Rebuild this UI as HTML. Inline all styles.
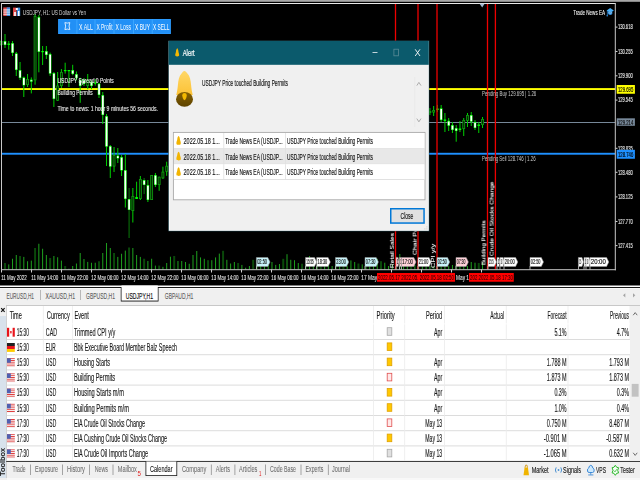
<!DOCTYPE html><html><head><meta charset="utf-8"><style>html,body{margin:0;padding:0;background:#000;width:640px;height:480px;overflow:hidden} svg{display:block} text{font-family:"Liberation Sans", sans-serif;white-space:pre}</style></head><body>
<svg width="640" height="480" viewBox="0 0 640 480">
<rect x="0.00" y="0.00" width="640.00" height="288.00" fill="#000"/>
<rect x="0.00" y="0.00" width="640.00" height="1.80" fill="#a8a8a8"/>
<rect x="4.00" y="263.00" width="2.00" height="6.50" fill="#0a480a"/>
<rect x="8.26" y="264.40" width="1.00" height="5.10" fill="#1ea01e"/>
<rect x="12.02" y="258.75" width="1.00" height="10.75" fill="#1ea01e"/>
<rect x="15.78" y="255.00" width="1.00" height="14.50" fill="#1ea01e"/>
<rect x="19.04" y="256.00" width="2.00" height="13.50" fill="#0a480a"/>
<rect x="23.30" y="256.90" width="1.00" height="12.60" fill="#1ea01e"/>
<rect x="27.06" y="261.25" width="1.00" height="8.25" fill="#1ea01e"/>
<rect x="30.82" y="260.60" width="1.00" height="8.90" fill="#1ea01e"/>
<rect x="34.08" y="248.00" width="2.00" height="21.50" fill="#0a480a"/>
<rect x="38.34" y="243.75" width="1.00" height="25.75" fill="#1ea01e"/>
<rect x="42.10" y="248.75" width="1.00" height="20.75" fill="#1ea01e"/>
<rect x="45.86" y="255.00" width="1.00" height="14.50" fill="#1ea01e"/>
<rect x="49.12" y="258.00" width="2.00" height="11.50" fill="#0a480a"/>
<rect x="53.38" y="256.00" width="1.00" height="13.50" fill="#1ea01e"/>
<rect x="57.14" y="257.25" width="1.00" height="12.25" fill="#1ea01e"/>
<rect x="60.90" y="260.60" width="1.00" height="8.90" fill="#1ea01e"/>
<rect x="64.16" y="266.00" width="2.00" height="3.50" fill="#0a480a"/>
<rect x="68.42" y="268.75" width="1.00" height="0.75" fill="#1ea01e"/>
<rect x="72.18" y="266.00" width="1.00" height="3.50" fill="#1ea01e"/>
<rect x="75.94" y="263.50" width="1.00" height="6.00" fill="#1ea01e"/>
<rect x="79.70" y="253.00" width="1.00" height="16.50" fill="#1ea01e"/>
<rect x="83.46" y="259.00" width="1.00" height="10.50" fill="#1ea01e"/>
<rect x="87.22" y="261.90" width="1.00" height="7.60" fill="#1ea01e"/>
<rect x="90.98" y="262.75" width="1.00" height="6.75" fill="#1ea01e"/>
<rect x="94.74" y="262.75" width="1.00" height="6.75" fill="#1ea01e"/>
<rect x="98.00" y="261.25" width="2.00" height="8.25" fill="#0a480a"/>
<rect x="102.26" y="253.00" width="1.00" height="16.50" fill="#1ea01e"/>
<rect x="106.02" y="243.00" width="1.00" height="26.50" fill="#1ea01e"/>
<rect x="109.78" y="248.00" width="1.00" height="21.50" fill="#1ea01e"/>
<rect x="113.04" y="253.00" width="2.00" height="16.50" fill="#0a480a"/>
<rect x="117.30" y="256.90" width="1.00" height="12.60" fill="#1ea01e"/>
<rect x="121.06" y="253.75" width="1.00" height="15.75" fill="#1ea01e"/>
<rect x="124.82" y="250.60" width="1.00" height="18.90" fill="#1ea01e"/>
<rect x="128.08" y="247.50" width="2.00" height="22.00" fill="#0a480a"/>
<rect x="132.34" y="248.00" width="1.00" height="21.50" fill="#1ea01e"/>
<rect x="136.10" y="255.00" width="1.00" height="14.50" fill="#1ea01e"/>
<rect x="139.86" y="256.90" width="1.00" height="12.60" fill="#1ea01e"/>
<rect x="143.12" y="258.75" width="2.00" height="10.75" fill="#0a480a"/>
<rect x="147.38" y="261.00" width="1.00" height="8.50" fill="#1ea01e"/>
<rect x="151.14" y="258.75" width="1.00" height="10.75" fill="#1ea01e"/>
<rect x="154.90" y="265.60" width="1.00" height="3.90" fill="#1ea01e"/>
<rect x="158.16" y="265.60" width="2.00" height="3.90" fill="#0a480a"/>
<rect x="162.42" y="266.80" width="1.00" height="2.70" fill="#1ea01e"/>
<rect x="166.18" y="263.00" width="1.00" height="6.50" fill="#1ea01e"/>
<rect x="169.94" y="256.70" width="1.00" height="12.80" fill="#1ea01e"/>
<rect x="173.20" y="256.00" width="2.00" height="13.50" fill="#0a480a"/>
<rect x="177.46" y="261.00" width="1.00" height="8.50" fill="#1ea01e"/>
<rect x="181.22" y="261.00" width="1.00" height="8.50" fill="#1ea01e"/>
<rect x="184.98" y="262.00" width="1.00" height="7.50" fill="#1ea01e"/>
<rect x="188.74" y="263.75" width="1.00" height="5.75" fill="#1ea01e"/>
<rect x="192.50" y="255.00" width="1.00" height="14.50" fill="#1ea01e"/>
<rect x="196.26" y="251.00" width="1.00" height="18.50" fill="#1ea01e"/>
<rect x="200.02" y="257.40" width="1.00" height="12.10" fill="#1ea01e"/>
<rect x="203.78" y="258.80" width="1.00" height="10.70" fill="#1ea01e"/>
<rect x="207.04" y="260.20" width="2.00" height="9.30" fill="#0a480a"/>
<rect x="211.30" y="260.20" width="1.00" height="9.30" fill="#1ea01e"/>
<rect x="215.06" y="257.40" width="1.00" height="12.10" fill="#1ea01e"/>
<rect x="218.82" y="253.60" width="1.00" height="15.90" fill="#1ea01e"/>
<rect x="222.08" y="250.80" width="2.00" height="18.70" fill="#0a480a"/>
<rect x="226.34" y="259.80" width="1.00" height="9.70" fill="#1ea01e"/>
<rect x="230.10" y="263.50" width="1.00" height="6.00" fill="#1ea01e"/>
<rect x="233.86" y="262.00" width="1.00" height="7.50" fill="#1ea01e"/>
<rect x="237.12" y="263.00" width="2.00" height="6.50" fill="#0a480a"/>
<rect x="241.38" y="264.90" width="1.00" height="4.60" fill="#1ea01e"/>
<rect x="245.14" y="267.70" width="1.00" height="1.80" fill="#1ea01e"/>
<rect x="248.90" y="266.00" width="1.00" height="3.50" fill="#1ea01e"/>
<rect x="252.16" y="259.80" width="2.00" height="9.70" fill="#0a480a"/>
<rect x="256.42" y="265.00" width="1.00" height="4.50" fill="#1ea01e"/>
<rect x="260.18" y="266.00" width="1.00" height="3.50" fill="#1ea01e"/>
<rect x="263.94" y="266.00" width="1.00" height="3.50" fill="#1ea01e"/>
<rect x="267.70" y="265.00" width="1.00" height="4.50" fill="#1ea01e"/>
<rect x="271.46" y="262.00" width="1.00" height="7.50" fill="#1ea01e"/>
<rect x="275.22" y="264.90" width="1.00" height="4.60" fill="#1ea01e"/>
<rect x="278.98" y="264.00" width="1.00" height="5.50" fill="#1ea01e"/>
<rect x="282.24" y="258.80" width="2.00" height="10.70" fill="#0a480a"/>
<rect x="286.50" y="254.20" width="1.00" height="15.30" fill="#1ea01e"/>
<rect x="290.26" y="259.80" width="1.00" height="9.70" fill="#1ea01e"/>
<rect x="294.02" y="260.20" width="1.00" height="9.30" fill="#1ea01e"/>
<rect x="297.78" y="263.00" width="1.00" height="6.50" fill="#1ea01e"/>
<rect x="301.04" y="263.75" width="2.00" height="5.75" fill="#0a480a"/>
<rect x="305.30" y="266.00" width="1.00" height="3.50" fill="#1ea01e"/>
<rect x="309.06" y="256.00" width="1.00" height="13.50" fill="#1ea01e"/>
<rect x="312.82" y="266.00" width="1.00" height="3.50" fill="#1ea01e"/>
<rect x="316.58" y="265.00" width="1.00" height="4.50" fill="#1ea01e"/>
<rect x="319.84" y="266.00" width="2.00" height="3.50" fill="#0a480a"/>
<rect x="324.10" y="266.00" width="1.00" height="3.50" fill="#1ea01e"/>
<rect x="327.86" y="264.00" width="1.00" height="5.50" fill="#1ea01e"/>
<rect x="331.62" y="266.00" width="1.00" height="3.50" fill="#1ea01e"/>
<rect x="335.38" y="264.30" width="1.00" height="5.20" fill="#1ea01e"/>
<rect x="339.14" y="264.00" width="1.00" height="5.50" fill="#1ea01e"/>
<rect x="342.40" y="265.00" width="2.00" height="4.50" fill="#0a480a"/>
<rect x="346.66" y="266.00" width="1.00" height="3.50" fill="#1ea01e"/>
<rect x="350.42" y="260.40" width="1.00" height="9.10" fill="#1ea01e"/>
<rect x="354.18" y="262.00" width="1.00" height="7.50" fill="#1ea01e"/>
<rect x="357.44" y="263.50" width="2.00" height="6.00" fill="#0a480a"/>
<rect x="361.70" y="264.30" width="1.00" height="5.20" fill="#1ea01e"/>
<rect x="365.46" y="266.00" width="1.00" height="3.50" fill="#1ea01e"/>
<rect x="369.22" y="266.00" width="1.00" height="3.50" fill="#1ea01e"/>
<rect x="372.98" y="265.00" width="1.00" height="4.50" fill="#1ea01e"/>
<rect x="376.74" y="258.80" width="1.00" height="10.70" fill="#1ea01e"/>
<rect x="380.00" y="261.20" width="2.00" height="8.30" fill="#0a480a"/>
<rect x="384.26" y="262.70" width="1.00" height="6.80" fill="#1ea01e"/>
<rect x="388.02" y="266.00" width="1.00" height="3.50" fill="#1ea01e"/>
<rect x="391.78" y="264.00" width="1.00" height="5.50" fill="#1ea01e"/>
<rect x="395.54" y="256.50" width="1.00" height="13.00" fill="#1ea01e"/>
<rect x="399.30" y="254.00" width="1.00" height="15.50" fill="#1ea01e"/>
<rect x="403.06" y="266.00" width="1.00" height="3.50" fill="#1ea01e"/>
<rect x="406.82" y="266.00" width="1.00" height="3.50" fill="#1ea01e"/>
<rect x="410.08" y="266.00" width="2.00" height="3.50" fill="#0a480a"/>
<rect x="414.34" y="265.00" width="1.00" height="4.50" fill="#1ea01e"/>
<rect x="418.10" y="266.00" width="1.00" height="3.50" fill="#1ea01e"/>
<rect x="421.86" y="266.00" width="1.00" height="3.50" fill="#1ea01e"/>
<rect x="425.62" y="265.00" width="1.00" height="4.50" fill="#1ea01e"/>
<rect x="429.38" y="266.00" width="1.00" height="3.50" fill="#1ea01e"/>
<rect x="432.64" y="266.00" width="2.00" height="3.50" fill="#0a480a"/>
<rect x="436.90" y="266.00" width="1.00" height="3.50" fill="#1ea01e"/>
<rect x="440.66" y="266.00" width="1.00" height="3.50" fill="#1ea01e"/>
<rect x="444.42" y="265.00" width="1.00" height="4.50" fill="#1ea01e"/>
<rect x="448.18" y="266.00" width="1.00" height="3.50" fill="#1ea01e"/>
<rect x="451.94" y="265.00" width="1.00" height="4.50" fill="#1ea01e"/>
<rect x="455.20" y="265.00" width="2.00" height="4.50" fill="#0a480a"/>
<rect x="459.46" y="266.00" width="1.00" height="3.50" fill="#1ea01e"/>
<rect x="463.22" y="266.00" width="1.00" height="3.50" fill="#1ea01e"/>
<rect x="466.98" y="266.00" width="1.00" height="3.50" fill="#1ea01e"/>
<rect x="470.74" y="262.00" width="1.00" height="7.50" fill="#1ea01e"/>
<rect x="474.50" y="262.70" width="1.00" height="6.80" fill="#1ea01e"/>
<rect x="477.76" y="263.00" width="2.00" height="6.50" fill="#0a480a"/>
<rect x="482.02" y="262.50" width="1.00" height="7.00" fill="#1ea01e"/>
<rect x="1.00" y="88.10" width="614.00" height="1.90" fill="#ffff00"/>
<rect x="1.00" y="122.00" width="614.00" height="1.00" fill="#778899"/>
<rect x="1.00" y="152.80" width="614.00" height="1.90" fill="#1e90ff"/>
<rect x="0.74" y="40.00" width="1.00" height="6.00" fill="#00d000"/>
<rect x="-0.16" y="41.00" width="2.80" height="4.00" fill="#10a010"/>
<rect x="0.64" y="41.80" width="1.20" height="2.40" fill="#042a04"/>
<rect x="4.50" y="34.00" width="1.00" height="14.00" fill="#00d000"/>
<rect x="3.70" y="41.00" width="2.60" height="4.00" fill="#00ff00"/>
<rect x="4.20" y="41.70" width="1.70" height="2.80" fill="#ffffff"/>
<rect x="8.26" y="41.00" width="1.00" height="8.70" fill="#00d000"/>
<rect x="7.46" y="43.50" width="2.60" height="1.50" fill="#00ff00"/>
<rect x="12.02" y="41.00" width="1.00" height="15.00" fill="#00d000"/>
<rect x="11.22" y="43.00" width="2.60" height="10.00" fill="#00ff00"/>
<rect x="11.72" y="43.70" width="1.70" height="8.80" fill="#ffffff"/>
<rect x="15.78" y="51.90" width="1.00" height="24.10" fill="#00d000"/>
<rect x="14.98" y="53.30" width="2.60" height="16.70" fill="#00ff00"/>
<rect x="15.48" y="54.00" width="1.70" height="15.50" fill="#ffffff"/>
<rect x="19.54" y="62.00" width="1.00" height="18.00" fill="#00d000"/>
<rect x="18.74" y="70.00" width="2.60" height="8.00" fill="#00ff00"/>
<rect x="19.24" y="70.70" width="1.70" height="6.80" fill="#ffffff"/>
<rect x="23.30" y="76.60" width="1.00" height="20.40" fill="#00d000"/>
<rect x="22.50" y="77.40" width="2.60" height="8.00" fill="#00ff00"/>
<rect x="23.00" y="78.10" width="1.70" height="6.80" fill="#ffffff"/>
<rect x="27.06" y="74.00" width="1.00" height="13.00" fill="#00d000"/>
<rect x="26.16" y="79.00" width="2.80" height="6.00" fill="#10a010"/>
<rect x="26.96" y="79.80" width="1.20" height="4.40" fill="#042a04"/>
<rect x="30.82" y="77.40" width="1.00" height="16.00" fill="#00d000"/>
<rect x="30.02" y="79.60" width="2.60" height="2.15" fill="#00ff00"/>
<rect x="30.52" y="80.30" width="1.70" height="0.95" fill="#ffffff"/>
<rect x="34.58" y="14.00" width="1.00" height="70.70" fill="#00d000"/>
<rect x="33.68" y="16.00" width="2.80" height="64.30" fill="#10a010"/>
<rect x="34.48" y="16.80" width="1.20" height="62.70" fill="#042a04"/>
<rect x="38.34" y="15.00" width="1.00" height="57.30" fill="#00d000"/>
<rect x="37.54" y="17.00" width="2.60" height="34.90" fill="#00ff00"/>
<rect x="38.04" y="17.70" width="1.70" height="33.70" fill="#ffffff"/>
<rect x="42.10" y="46.00" width="1.00" height="19.00" fill="#00d000"/>
<rect x="41.30" y="51.00" width="2.60" height="1.20" fill="#00ff00"/>
<rect x="45.86" y="46.00" width="1.00" height="13.00" fill="#00d000"/>
<rect x="45.06" y="51.00" width="2.60" height="4.00" fill="#00ff00"/>
<rect x="45.56" y="51.70" width="1.70" height="2.80" fill="#ffffff"/>
<rect x="49.62" y="52.60" width="1.00" height="23.40" fill="#00d000"/>
<rect x="48.82" y="54.00" width="2.60" height="19.70" fill="#00ff00"/>
<rect x="49.32" y="54.70" width="1.70" height="18.50" fill="#ffffff"/>
<rect x="53.38" y="72.00" width="1.00" height="35.00" fill="#00d000"/>
<rect x="52.58" y="73.00" width="2.60" height="26.00" fill="#00ff00"/>
<rect x="53.08" y="73.70" width="1.70" height="24.80" fill="#ffffff"/>
<rect x="57.14" y="72.00" width="1.00" height="29.00" fill="#00d000"/>
<rect x="56.24" y="85.60" width="2.80" height="15.10" fill="#10a010"/>
<rect x="57.04" y="86.40" width="1.20" height="13.50" fill="#042a04"/>
<rect x="60.90" y="69.00" width="1.00" height="19.00" fill="#00d000"/>
<rect x="60.00" y="72.00" width="2.80" height="14.00" fill="#10a010"/>
<rect x="60.80" y="72.80" width="1.20" height="12.40" fill="#042a04"/>
<rect x="64.66" y="62.70" width="1.00" height="10.90" fill="#00d000"/>
<rect x="63.86" y="70.00" width="2.60" height="1.20" fill="#00ff00"/>
<rect x="68.42" y="70.00" width="1.00" height="17.00" fill="#00d000"/>
<rect x="67.62" y="70.00" width="2.60" height="1.20" fill="#00ff00"/>
<rect x="72.18" y="64.80" width="1.00" height="10.40" fill="#00d000"/>
<rect x="71.38" y="70.00" width="2.60" height="4.00" fill="#00ff00"/>
<rect x="71.88" y="70.70" width="1.70" height="2.80" fill="#ffffff"/>
<rect x="75.94" y="71.50" width="1.00" height="8.90" fill="#00d000"/>
<rect x="75.14" y="74.00" width="2.60" height="4.30" fill="#00ff00"/>
<rect x="75.64" y="74.70" width="1.70" height="3.10" fill="#ffffff"/>
<rect x="79.70" y="77.80" width="1.00" height="25.00" fill="#00d000"/>
<rect x="78.90" y="80.00" width="2.60" height="6.00" fill="#00ff00"/>
<rect x="79.40" y="80.70" width="1.70" height="4.80" fill="#ffffff"/>
<rect x="83.46" y="78.00" width="1.00" height="8.00" fill="#00d000"/>
<rect x="82.66" y="80.00" width="2.60" height="4.00" fill="#00ff00"/>
<rect x="83.16" y="80.70" width="1.70" height="2.80" fill="#ffffff"/>
<rect x="87.22" y="74.00" width="1.00" height="15.20" fill="#00d000"/>
<rect x="86.32" y="80.00" width="2.80" height="6.00" fill="#10a010"/>
<rect x="87.12" y="80.80" width="1.20" height="4.40" fill="#042a04"/>
<rect x="90.98" y="80.40" width="1.00" height="8.80" fill="#00d000"/>
<rect x="90.18" y="82.00" width="2.60" height="4.00" fill="#00ff00"/>
<rect x="90.68" y="82.70" width="1.70" height="2.80" fill="#ffffff"/>
<rect x="94.74" y="79.00" width="1.00" height="6.60" fill="#00d000"/>
<rect x="93.94" y="82.50" width="2.60" height="1.20" fill="#00ff00"/>
<rect x="98.50" y="83.00" width="1.00" height="15.00" fill="#00d000"/>
<rect x="97.70" y="83.50" width="2.60" height="11.50" fill="#00ff00"/>
<rect x="98.20" y="84.20" width="1.70" height="10.30" fill="#ffffff"/>
<rect x="102.26" y="92.00" width="1.00" height="32.00" fill="#00d000"/>
<rect x="101.46" y="95.00" width="2.60" height="20.00" fill="#00ff00"/>
<rect x="101.96" y="95.70" width="1.70" height="18.80" fill="#ffffff"/>
<rect x="106.02" y="114.00" width="1.00" height="52.00" fill="#00d000"/>
<rect x="105.22" y="116.00" width="2.60" height="30.70" fill="#00ff00"/>
<rect x="105.72" y="116.70" width="1.70" height="29.50" fill="#ffffff"/>
<rect x="109.78" y="145.00" width="1.00" height="33.00" fill="#00d000"/>
<rect x="108.98" y="146.00" width="2.60" height="20.70" fill="#00ff00"/>
<rect x="109.48" y="146.70" width="1.70" height="19.50" fill="#ffffff"/>
<rect x="113.54" y="147.00" width="1.00" height="25.00" fill="#00d000"/>
<rect x="112.64" y="155.00" width="2.80" height="11.50" fill="#10a010"/>
<rect x="113.44" y="155.80" width="1.20" height="9.90" fill="#042a04"/>
<rect x="117.30" y="148.00" width="1.00" height="15.00" fill="#00d000"/>
<rect x="116.50" y="155.50" width="2.60" height="3.00" fill="#00ff00"/>
<rect x="117.00" y="156.20" width="1.70" height="1.80" fill="#ffffff"/>
<rect x="121.06" y="155.00" width="1.00" height="21.00" fill="#00d000"/>
<rect x="120.26" y="157.00" width="2.60" height="13.50" fill="#00ff00"/>
<rect x="120.76" y="157.70" width="1.70" height="12.30" fill="#ffffff"/>
<rect x="124.82" y="154.00" width="1.00" height="53.50" fill="#00d000"/>
<rect x="124.02" y="170.00" width="2.60" height="29.00" fill="#00ff00"/>
<rect x="124.52" y="170.70" width="1.70" height="27.80" fill="#ffffff"/>
<rect x="128.58" y="188.00" width="1.00" height="50.00" fill="#0a7a0a"/>
<rect x="127.78" y="199.00" width="2.60" height="11.00" fill="#00ff00"/>
<rect x="128.28" y="199.70" width="1.70" height="9.80" fill="#ffffff"/>
<rect x="132.34" y="188.00" width="1.00" height="34.50" fill="#00d000"/>
<rect x="131.44" y="196.00" width="2.80" height="15.00" fill="#10a010"/>
<rect x="132.24" y="196.80" width="1.20" height="13.40" fill="#042a04"/>
<rect x="136.10" y="181.70" width="1.00" height="17.30" fill="#00d000"/>
<rect x="135.30" y="197.00" width="2.60" height="2.00" fill="#00ff00"/>
<rect x="139.86" y="176.00" width="1.00" height="24.00" fill="#00d000"/>
<rect x="138.96" y="179.00" width="2.80" height="20.00" fill="#10a010"/>
<rect x="139.76" y="179.80" width="1.20" height="18.40" fill="#042a04"/>
<rect x="143.62" y="178.00" width="1.00" height="16.00" fill="#0a7a0a"/>
<rect x="142.82" y="180.00" width="2.60" height="5.00" fill="#00ff00"/>
<rect x="143.32" y="180.70" width="1.70" height="3.80" fill="#ffffff"/>
<rect x="147.38" y="180.00" width="1.00" height="22.00" fill="#00d000"/>
<rect x="146.58" y="185.00" width="2.60" height="15.00" fill="#00ff00"/>
<rect x="147.08" y="185.70" width="1.70" height="13.80" fill="#ffffff"/>
<rect x="151.14" y="175.00" width="1.00" height="25.00" fill="#00d000"/>
<rect x="150.24" y="175.00" width="2.80" height="25.00" fill="#10a010"/>
<rect x="151.04" y="175.80" width="1.20" height="23.40" fill="#042a04"/>
<rect x="154.90" y="173.00" width="1.00" height="14.00" fill="#00d000"/>
<rect x="154.10" y="175.00" width="2.60" height="10.00" fill="#00ff00"/>
<rect x="154.60" y="175.70" width="1.70" height="8.80" fill="#ffffff"/>
<rect x="158.66" y="176.70" width="1.00" height="14.10" fill="#00d000"/>
<rect x="157.76" y="176.70" width="2.80" height="8.30" fill="#10a010"/>
<rect x="158.56" y="177.50" width="1.20" height="6.70" fill="#042a04"/>
<rect x="162.42" y="166.70" width="1.00" height="12.30" fill="#00d000"/>
<rect x="161.52" y="171.70" width="2.80" height="6.60" fill="#10a010"/>
<rect x="162.32" y="172.50" width="1.20" height="5.00" fill="#042a04"/>
<rect x="166.18" y="161.70" width="1.00" height="14.10" fill="#00d000"/>
<rect x="165.28" y="165.80" width="2.80" height="5.90" fill="#10a010"/>
<rect x="166.08" y="166.60" width="1.20" height="4.30" fill="#042a04"/>
<rect x="429.38" y="108.00" width="1.00" height="7.00" fill="#00d000"/>
<rect x="428.48" y="111.00" width="2.80" height="2.00" fill="#10a010"/>
<rect x="429.28" y="111.80" width="1.20" height="0.40" fill="#042a04"/>
<rect x="433.14" y="106.00" width="1.00" height="10.00" fill="#00d000"/>
<rect x="432.24" y="110.00" width="2.80" height="2.50" fill="#10a010"/>
<rect x="433.04" y="110.80" width="1.20" height="0.90" fill="#042a04"/>
<rect x="436.90" y="105.00" width="1.00" height="7.00" fill="#00d000"/>
<rect x="436.10" y="108.50" width="2.60" height="1.50" fill="#00ff00"/>
<rect x="440.66" y="105.00" width="1.00" height="17.00" fill="#00d000"/>
<rect x="439.86" y="108.30" width="2.60" height="11.70" fill="#00ff00"/>
<rect x="440.36" y="109.00" width="1.70" height="10.50" fill="#ffffff"/>
<rect x="444.42" y="113.00" width="1.00" height="19.00" fill="#00d000"/>
<rect x="443.62" y="119.50" width="2.60" height="1.50" fill="#00ff00"/>
<rect x="448.18" y="118.00" width="1.00" height="13.00" fill="#00d000"/>
<rect x="447.38" y="120.80" width="2.60" height="5.00" fill="#00ff00"/>
<rect x="447.88" y="121.50" width="1.70" height="3.80" fill="#ffffff"/>
<rect x="451.94" y="122.00" width="1.00" height="11.00" fill="#00d000"/>
<rect x="451.14" y="125.00" width="2.60" height="5.00" fill="#00ff00"/>
<rect x="451.64" y="125.70" width="1.70" height="3.80" fill="#ffffff"/>
<rect x="455.70" y="125.00" width="1.00" height="16.70" fill="#00d000"/>
<rect x="454.90" y="128.00" width="2.60" height="3.00" fill="#00ff00"/>
<rect x="455.40" y="128.70" width="1.70" height="1.80" fill="#ffffff"/>
<rect x="459.46" y="121.00" width="1.00" height="11.00" fill="#00d000"/>
<rect x="458.66" y="128.50" width="2.60" height="1.50" fill="#00ff00"/>
<rect x="463.22" y="118.00" width="1.00" height="18.00" fill="#00d000"/>
<rect x="462.32" y="120.00" width="2.80" height="9.00" fill="#10a010"/>
<rect x="463.12" y="120.80" width="1.20" height="7.40" fill="#042a04"/>
<rect x="466.98" y="113.00" width="1.00" height="14.00" fill="#00d000"/>
<rect x="466.08" y="115.00" width="2.80" height="5.80" fill="#10a010"/>
<rect x="466.88" y="115.80" width="1.20" height="4.20" fill="#042a04"/>
<rect x="470.74" y="112.00" width="1.00" height="14.00" fill="#00d000"/>
<rect x="469.94" y="115.00" width="2.60" height="6.70" fill="#00ff00"/>
<rect x="470.44" y="115.70" width="1.70" height="5.50" fill="#ffffff"/>
<rect x="474.50" y="120.00" width="1.00" height="10.00" fill="#00d000"/>
<rect x="473.70" y="122.00" width="2.60" height="6.00" fill="#00ff00"/>
<rect x="474.20" y="122.70" width="1.70" height="4.80" fill="#ffffff"/>
<rect x="478.26" y="122.00" width="1.00" height="11.00" fill="#00d000"/>
<rect x="477.46" y="124.50" width="2.60" height="1.50" fill="#00ff00"/>
<rect x="482.02" y="117.00" width="1.00" height="11.00" fill="#00d000"/>
<rect x="481.12" y="119.00" width="2.80" height="6.00" fill="#10a010"/>
<rect x="481.92" y="119.80" width="1.20" height="4.40" fill="#042a04"/>
<rect x="394.85" y="4.00" width="1.30" height="265.50" fill="#ee0000"/>
<rect x="417.35" y="4.00" width="1.30" height="265.50" fill="#ee0000"/>
<rect x="436.35" y="4.00" width="1.30" height="265.50" fill="#ee0000"/>
<rect x="486.85" y="4.00" width="1.30" height="265.50" fill="#ee0000"/>
<rect x="494.75" y="4.00" width="1.30" height="265.50" fill="#ee0000"/>
<rect x="1.00" y="3.00" width="614.50" height="1.00" fill="#e8e8e8"/>
<rect x="1.00" y="3.00" width="1.00" height="267.00" fill="#c8c8c8"/>
<rect x="614.80" y="3.00" width="1.00" height="267.30" fill="#c8c8c8"/>
<rect x="1.00" y="269.20" width="614.80" height="1.00" fill="#c8c8c8"/>
<polygon points="479.6,3.8 484.6,3.8 482.2,7.6" fill="#a0b8d0"/>
<rect x="3.30" y="7.40" width="6.80" height="8.60" fill="#e04848"/>
<rect x="6.70" y="7.40" width="3.40" height="8.60" fill="#3a8ee0"/>
<rect x="3.30" y="9.50" width="6.80" height="0.90" fill="#ffffff"/>
<rect x="3.30" y="11.60" width="6.80" height="0.90" fill="#ffffff"/>
<rect x="3.30" y="13.70" width="6.80" height="0.90" fill="#ffffff"/>
<rect x="13.00" y="7.60" width="3.60" height="8.40" fill="#e04848"/>
<rect x="16.80" y="7.60" width="3.40" height="8.40" fill="#3a8ee0"/>
<rect x="14.20" y="12.00" width="1.60" height="4.00" fill="#ffffff"/>
<rect x="18.00" y="11.00" width="1.50" height="5.00" fill="#ffffff"/>
<rect x="15.80" y="8.00" width="2.00" height="2.00" fill="#ffffff"/>
<text x="22.80" y="14.60" font-size="7.6" fill="#d4d4d4" text-anchor="start" textLength="63.20" lengthAdjust="spacingAndGlyphs" style="will-change:transform">USDJPY, H1: US Dollar vs Yen</text>
<rect x="58.10" y="19.00" width="112.80" height="15.00" fill="#2e9cff"/>
<rect x="58.90" y="19.90" width="111.20" height="13.40" fill="#2290f6"/>
<rect x="76.40" y="19.25" width="1.00" height="14.75" fill="#3aa6ff"/>
<rect x="94.50" y="19.25" width="1.00" height="14.75" fill="#3aa6ff"/>
<rect x="113.50" y="19.25" width="1.00" height="14.75" fill="#3aa6ff"/>
<rect x="133.00" y="19.25" width="1.00" height="14.75" fill="#3aa6ff"/>
<rect x="151.75" y="19.25" width="1.00" height="14.75" fill="#3aa6ff"/>
<path d="M64.9,22.6 Q66.4,26.1 64.9,29.6 Q67.35,28.6 69.8,29.6 Q68.3,26.1 69.8,22.6 Q67.35,23.6 64.9,22.6 Z" fill="none" stroke="#f4f8ff" stroke-width="0.85"/>
<text x="79.00" y="29.80" font-size="8.2" fill="#ffffff" text-anchor="start" textLength="14.00" lengthAdjust="spacingAndGlyphs" style="will-change:transform">X ALL</text>
<text x="96.50" y="29.80" font-size="8.2" fill="#ffffff" text-anchor="start" textLength="16.00" lengthAdjust="spacingAndGlyphs" style="will-change:transform">X Profit</text>
<text x="115.50" y="29.80" font-size="8.2" fill="#ffffff" text-anchor="start" textLength="15.50" lengthAdjust="spacingAndGlyphs" style="will-change:transform">X Loss</text>
<text x="135.00" y="29.80" font-size="8.2" fill="#ffffff" text-anchor="start" textLength="15.00" lengthAdjust="spacingAndGlyphs" style="will-change:transform">X BUY</text>
<text x="153.00" y="29.80" font-size="8.2" fill="#ffffff" text-anchor="start" textLength="16.50" lengthAdjust="spacingAndGlyphs" style="will-change:transform">X SELL</text>
<text x="57.50" y="83.00" font-size="8.0" fill="#f0f0f0" text-anchor="start" textLength="56.30" lengthAdjust="spacingAndGlyphs" stroke="#f0f0f0" stroke-width="0.1" style="will-change:transform">USDJPY Spread 0 Points</text>
<text x="57.50" y="95.20" font-size="8.0" fill="#f0f0f0" text-anchor="start" textLength="35.30" lengthAdjust="spacingAndGlyphs" stroke="#f0f0f0" stroke-width="0.1" style="will-change:transform">Building Permits</text>
<text x="57.50" y="111.20" font-size="8.0" fill="#f0f0f0" text-anchor="start" textLength="100.40" lengthAdjust="spacingAndGlyphs" stroke="#f0f0f0" stroke-width="0.1" style="will-change:transform">Time to news: 1 hour 9 minutes 56 seconds.</text>
<text x="482.10" y="95.90" font-size="7.0" fill="#c8c8c8" text-anchor="start" textLength="54.20" lengthAdjust="spacingAndGlyphs" style="will-change:transform">Pending Buy 129.695 | 1.26</text>
<text x="482.10" y="160.90" font-size="7.0" fill="#c8c8c8" text-anchor="start" textLength="53.50" lengthAdjust="spacingAndGlyphs" style="will-change:transform">Pending Sell 128.746 | 1.26</text>
<text x="573.20" y="14.80" font-size="7.6" fill="#f4f4f4" text-anchor="start" textLength="31.90" lengthAdjust="spacingAndGlyphs" stroke="#f4f4f4" stroke-width="0.1" style="will-change:transform">Trade News EA</text>
<polygon points="606.6,10.6 610.2,8.0 613.8,10.6 610.2,12.9" fill="#49b0f8"/>
<path d="M608.1,11.6 L608.1,14.0 Q610.2,15.8 612.3,14.0 L612.3,11.6 L610.2,13.0 Z" fill="#2f8fe0"/>
<path d="M608.6,12.6 Q610.2,13.8 611.8,12.6" fill="none" stroke="#d8eeff" stroke-width="0.7"/>
<rect x="606.90" y="10.80" width="0.70" height="4.40" fill="#2f8fe0"/>
<circle cx="607.2" cy="15.8" r="0.8" fill="#2f8fe0"/>
<rect x="615.50" y="26.60" width="2.00" height="1.00" fill="#d0d0d0"/>
<text x="617.90" y="29.30" font-size="8.0" fill="#f0f0f0" text-anchor="start" textLength="14.80" lengthAdjust="spacingAndGlyphs" stroke="#f0f0f0" stroke-width="0.12" style="will-change:transform">130.618</text>
<rect x="615.50" y="51.00" width="2.00" height="1.00" fill="#d0d0d0"/>
<text x="617.90" y="53.70" font-size="8.0" fill="#f0f0f0" text-anchor="start" textLength="14.80" lengthAdjust="spacingAndGlyphs" stroke="#f0f0f0" stroke-width="0.12" style="will-change:transform">130.255</text>
<rect x="615.50" y="75.30" width="2.00" height="1.00" fill="#d0d0d0"/>
<text x="617.90" y="78.00" font-size="8.0" fill="#f0f0f0" text-anchor="start" textLength="14.80" lengthAdjust="spacingAndGlyphs" stroke="#f0f0f0" stroke-width="0.12" style="will-change:transform">129.900</text>
<rect x="615.50" y="99.60" width="2.00" height="1.00" fill="#d0d0d0"/>
<text x="617.90" y="102.30" font-size="8.0" fill="#f0f0f0" text-anchor="start" textLength="14.80" lengthAdjust="spacingAndGlyphs" stroke="#f0f0f0" stroke-width="0.12" style="will-change:transform">129.545</text>
<rect x="615.50" y="147.80" width="2.00" height="1.00" fill="#d0d0d0"/>
<text x="617.90" y="150.50" font-size="8.0" fill="#f0f0f0" text-anchor="start" textLength="14.80" lengthAdjust="spacingAndGlyphs" stroke="#f0f0f0" stroke-width="0.12" style="will-change:transform">128.835</text>
<rect x="615.50" y="171.80" width="2.00" height="1.00" fill="#d0d0d0"/>
<text x="617.90" y="174.50" font-size="8.0" fill="#f0f0f0" text-anchor="start" textLength="14.80" lengthAdjust="spacingAndGlyphs" stroke="#f0f0f0" stroke-width="0.12" style="will-change:transform">128.480</text>
<rect x="615.50" y="196.40" width="2.00" height="1.00" fill="#d0d0d0"/>
<text x="617.90" y="199.10" font-size="8.0" fill="#f0f0f0" text-anchor="start" textLength="14.80" lengthAdjust="spacingAndGlyphs" stroke="#f0f0f0" stroke-width="0.12" style="will-change:transform">128.125</text>
<rect x="615.50" y="221.00" width="2.00" height="1.00" fill="#d0d0d0"/>
<text x="617.90" y="223.70" font-size="8.0" fill="#f0f0f0" text-anchor="start" textLength="14.80" lengthAdjust="spacingAndGlyphs" stroke="#f0f0f0" stroke-width="0.12" style="will-change:transform">127.770</text>
<rect x="615.50" y="245.10" width="2.00" height="1.00" fill="#d0d0d0"/>
<text x="617.90" y="247.80" font-size="8.0" fill="#f0f0f0" text-anchor="start" textLength="14.80" lengthAdjust="spacingAndGlyphs" stroke="#f0f0f0" stroke-width="0.12" style="will-change:transform">127.415</text>
<rect x="616.70" y="85.00" width="18.20" height="8.75" fill="#ffff00"/>
<text x="617.90" y="92.28" font-size="8.0" fill="#000" text-anchor="start" textLength="15.40" lengthAdjust="spacingAndGlyphs" stroke="#000" stroke-width="0.15">129.695</text>
<rect x="616.70" y="118.30" width="18.20" height="7.50" fill="#778899"/>
<text x="617.90" y="124.95" font-size="8.0" fill="#0a0a0a" text-anchor="start" textLength="15.40" lengthAdjust="spacingAndGlyphs" stroke="#0a0a0a" stroke-width="0.15">129.214</text>
<rect x="616.70" y="149.80" width="18.20" height="8.95" fill="#1e90ff"/>
<text x="617.90" y="157.18" font-size="8.0" fill="#000" text-anchor="start" textLength="15.40" lengthAdjust="spacingAndGlyphs" stroke="#000" stroke-width="0.15">128.746</text>
<rect x="1.00" y="269.50" width="1.00" height="3.00" fill="#d0d0d0"/>
<text x="1.20" y="279.50" font-size="7.9" fill="#ececec" text-anchor="start" textLength="25.50" lengthAdjust="spacingAndGlyphs" stroke="#ececec" stroke-width="0.08" style="will-change:transform">11 May 2022</text>
<rect x="31.00" y="269.50" width="1.00" height="3.00" fill="#d0d0d0"/>
<text x="31.20" y="279.50" font-size="7.9" fill="#ececec" text-anchor="start" textLength="27.20" lengthAdjust="spacingAndGlyphs" stroke="#ececec" stroke-width="0.08" style="will-change:transform">11 May 14:00</text>
<rect x="61.00" y="269.50" width="1.00" height="3.00" fill="#d0d0d0"/>
<text x="61.20" y="279.50" font-size="7.9" fill="#ececec" text-anchor="start" textLength="27.20" lengthAdjust="spacingAndGlyphs" stroke="#ececec" stroke-width="0.08" style="will-change:transform">11 May 22:00</text>
<rect x="91.00" y="269.50" width="1.00" height="3.00" fill="#d0d0d0"/>
<text x="91.20" y="279.50" font-size="7.9" fill="#ececec" text-anchor="start" textLength="27.20" lengthAdjust="spacingAndGlyphs" stroke="#ececec" stroke-width="0.08" style="will-change:transform">12 May 06:00</text>
<rect x="121.00" y="269.50" width="1.00" height="3.00" fill="#d0d0d0"/>
<text x="121.20" y="279.50" font-size="7.9" fill="#ececec" text-anchor="start" textLength="27.20" lengthAdjust="spacingAndGlyphs" stroke="#ececec" stroke-width="0.08" style="will-change:transform">12 May 14:00</text>
<rect x="151.00" y="269.50" width="1.00" height="3.00" fill="#d0d0d0"/>
<text x="151.20" y="279.50" font-size="7.9" fill="#ececec" text-anchor="start" textLength="27.20" lengthAdjust="spacingAndGlyphs" stroke="#ececec" stroke-width="0.08" style="will-change:transform">12 May 22:00</text>
<rect x="181.00" y="269.50" width="1.00" height="3.00" fill="#d0d0d0"/>
<text x="181.20" y="279.50" font-size="7.9" fill="#ececec" text-anchor="start" textLength="27.20" lengthAdjust="spacingAndGlyphs" stroke="#ececec" stroke-width="0.08" style="will-change:transform">13 May 06:00</text>
<rect x="211.00" y="269.50" width="1.00" height="3.00" fill="#d0d0d0"/>
<text x="211.20" y="279.50" font-size="7.9" fill="#ececec" text-anchor="start" textLength="27.20" lengthAdjust="spacingAndGlyphs" stroke="#ececec" stroke-width="0.08" style="will-change:transform">13 May 14:00</text>
<rect x="241.00" y="269.50" width="1.00" height="3.00" fill="#d0d0d0"/>
<text x="241.20" y="279.50" font-size="7.9" fill="#ececec" text-anchor="start" textLength="27.20" lengthAdjust="spacingAndGlyphs" stroke="#ececec" stroke-width="0.08" style="will-change:transform">13 May 22:00</text>
<rect x="271.00" y="269.50" width="1.00" height="3.00" fill="#d0d0d0"/>
<text x="271.20" y="279.50" font-size="7.9" fill="#ececec" text-anchor="start" textLength="27.20" lengthAdjust="spacingAndGlyphs" stroke="#ececec" stroke-width="0.08" style="will-change:transform">16 May 06:00</text>
<rect x="301.00" y="269.50" width="1.00" height="3.00" fill="#d0d0d0"/>
<text x="301.20" y="279.50" font-size="7.9" fill="#ececec" text-anchor="start" textLength="27.20" lengthAdjust="spacingAndGlyphs" stroke="#ececec" stroke-width="0.08" style="will-change:transform">16 May 14:00</text>
<rect x="331.00" y="269.50" width="1.00" height="3.00" fill="#d0d0d0"/>
<text x="331.20" y="279.50" font-size="7.9" fill="#ececec" text-anchor="start" textLength="27.20" lengthAdjust="spacingAndGlyphs" stroke="#ececec" stroke-width="0.08" style="will-change:transform">16 May 22:00</text>
<rect x="361.00" y="269.50" width="1.00" height="3.00" fill="#d0d0d0"/>
<text x="361.20" y="279.50" font-size="7.9" fill="#ececec" text-anchor="start" textLength="16.00" lengthAdjust="spacingAndGlyphs" stroke="#ececec" stroke-width="0.08" style="will-change:transform">17 May</text>
<rect x="391.00" y="269.50" width="1.00" height="3.00" fill="#d0d0d0"/>
<rect x="421.00" y="269.50" width="1.00" height="3.00" fill="#d0d0d0"/>
<rect x="451.00" y="269.50" width="1.00" height="3.00" fill="#d0d0d0"/>
<rect x="481.00" y="269.50" width="1.00" height="3.00" fill="#d0d0d0"/>
<text x="456.00" y="279.50" font-size="7.9" fill="#ececec" text-anchor="start" textLength="13.00" lengthAdjust="spacingAndGlyphs" stroke="#ececec" stroke-width="0.08" style="will-change:transform">May 1</text>
<rect x="377.00" y="273.00" width="78.00" height="8.75" fill="#ff0000"/>
<text x="378.00" y="280.30" font-size="7.4" fill="#1a0000" text-anchor="start" textLength="76.00" lengthAdjust="spacingAndGlyphs">2022.05.17 2022.05. 2022.05.18 02:50</text>
<rect x="469.00" y="273.00" width="44.75" height="8.75" fill="#ff0000"/>
<text x="470.00" y="280.30" font-size="7.4" fill="#1a0000" text-anchor="start" textLength="43.00" lengthAdjust="spacingAndGlyphs">202 2022.05.18 17:30</text>
<rect x="256.00" y="266.00" width="0.80" height="3.50" fill="#d0d0d0"/>
<polygon points="256.40,257.5 267.80,257.5 270.00,262.00 267.80,266.5 256.40,266.5" fill="#c8f4fa" stroke="#9a9a9a" stroke-width="0.5"/>
<text x="257.20" y="264.30" font-size="6.6" fill="#101010" text-anchor="start" textLength="9.80" lengthAdjust="spacingAndGlyphs" stroke="#101010" stroke-width="0.15">02:50</text>
<rect x="305.10" y="266.00" width="0.80" height="3.50" fill="#d0d0d0"/>
<polygon points="305.50,257.5 314.50,257.5 316.70,262.00 314.50,266.5 305.50,266.5" fill="#ffffff" stroke="#9a9a9a" stroke-width="0.5"/>
<text x="306.30" y="264.30" font-size="6.6" fill="#101010" text-anchor="start" textLength="7.40" lengthAdjust="spacingAndGlyphs" stroke="#101010" stroke-width="0.15">15:55</text>
<rect x="316.30" y="266.00" width="0.80" height="3.50" fill="#d0d0d0"/>
<polygon points="316.70,257.5 328.10,257.5 330.30,262.00 328.10,266.5 316.70,266.5" fill="#ffffff" stroke="#9a9a9a" stroke-width="0.5"/>
<text x="317.50" y="264.30" font-size="6.6" fill="#101010" text-anchor="start" textLength="9.80" lengthAdjust="spacingAndGlyphs" stroke="#101010" stroke-width="0.15">18:30</text>
<rect x="335.10" y="266.00" width="0.80" height="3.50" fill="#d0d0d0"/>
<polygon points="335.50,257.5 346.55,257.5 348.75,262.00 346.55,266.5 335.50,266.5" fill="#c8f4fa" stroke="#9a9a9a" stroke-width="0.5"/>
<text x="336.30" y="264.30" font-size="6.6" fill="#101010" text-anchor="start" textLength="9.45" lengthAdjust="spacingAndGlyphs" stroke="#101010" stroke-width="0.15">23:00</text>
<rect x="364.60" y="266.00" width="0.80" height="3.50" fill="#d0d0d0"/>
<polygon points="365.00,257.5 376.20,257.5 378.40,262.00 376.20,266.5 365.00,266.5" fill="#c8f4fa" stroke="#9a9a9a" stroke-width="0.5"/>
<text x="365.80" y="264.30" font-size="6.6" fill="#101010" text-anchor="start" textLength="9.60" lengthAdjust="spacingAndGlyphs" stroke="#101010" stroke-width="0.15">07:30</text>
<rect x="395.60" y="266.00" width="0.80" height="3.50" fill="#d0d0d0"/>
<polygon points="396.00,257.5 398.10,257.5 399.00,262.00 398.10,266.5 396.00,266.5" fill="#ffd0d8" stroke="#9a9a9a" stroke-width="0.5"/>
<text x="396.80" y="264.30" font-size="6.6" fill="#101010" text-anchor="start" textLength="1.50" lengthAdjust="spacingAndGlyphs" stroke="#101010" stroke-width="0.15">1</text>
<rect x="399.10" y="266.00" width="0.80" height="3.50" fill="#d0d0d0"/>
<polygon points="399.50,257.5 401.25,257.5 402.00,262.00 401.25,266.5 399.50,266.5" fill="#ffd0d8" stroke="#9a9a9a" stroke-width="0.5"/>
<text x="400.30" y="264.30" font-size="6.6" fill="#101010" text-anchor="start" textLength="1.50" lengthAdjust="spacingAndGlyphs" stroke="#101010" stroke-width="0.15">1</text>
<rect x="401.10" y="266.00" width="0.80" height="3.50" fill="#d0d0d0"/>
<polygon points="401.50,257.5 413.80,257.5 416.00,262.00 413.80,266.5 401.50,266.5" fill="#ffd0d8" stroke="#9a9a9a" stroke-width="0.5"/>
<text x="402.30" y="264.30" font-size="6.6" fill="#101010" text-anchor="start" textLength="10.70" lengthAdjust="spacingAndGlyphs" stroke="#101010" stroke-width="0.15">17:00</text>
<rect x="417.60" y="266.00" width="0.80" height="3.50" fill="#d0d0d0"/>
<polygon points="418.00,257.5 429.05,257.5 431.25,262.00 429.05,266.5 418.00,266.5" fill="#ffffff" stroke="#9a9a9a" stroke-width="0.5"/>
<text x="418.80" y="264.30" font-size="6.6" fill="#101010" text-anchor="start" textLength="9.45" lengthAdjust="spacingAndGlyphs" stroke="#101010" stroke-width="0.15">21:00</text>
<rect x="436.60" y="266.00" width="0.80" height="3.50" fill="#d0d0d0"/>
<polygon points="437.00,257.5 447.50,257.5 449.70,262.00 447.50,266.5 437.00,266.5" fill="#c8f4fa" stroke="#9a9a9a" stroke-width="0.5"/>
<text x="437.80" y="264.30" font-size="6.6" fill="#101010" text-anchor="start" textLength="8.90" lengthAdjust="spacingAndGlyphs" stroke="#101010" stroke-width="0.15">02:50</text>
<rect x="455.60" y="266.00" width="0.80" height="3.50" fill="#d0d0d0"/>
<polygon points="456.00,257.5 466.20,257.5 468.40,262.00 466.20,266.5 456.00,266.5" fill="#ffd0d8" stroke="#9a9a9a" stroke-width="0.5"/>
<text x="456.80" y="264.30" font-size="6.6" fill="#101010" text-anchor="start" textLength="8.60" lengthAdjust="spacingAndGlyphs" stroke="#101010" stroke-width="0.15">07:30</text>
<rect x="487.60" y="266.00" width="0.80" height="3.50" fill="#d0d0d0"/>
<polygon points="488.00,257.5 494.30,257.5 496.50,262.00 494.30,266.5 488.00,266.5" fill="#ffffff" stroke="#9a9a9a" stroke-width="0.5"/>
<text x="488.80" y="264.30" font-size="6.6" fill="#101010" text-anchor="start" textLength="4.70" lengthAdjust="spacingAndGlyphs" stroke="#101010" stroke-width="0.15">15:5</text>
<rect x="496.60" y="266.00" width="0.80" height="3.50" fill="#d0d0d0"/>
<polygon points="497.00,257.5 499.10,257.5 500.00,262.00 499.10,266.5 497.00,266.5" fill="#ffffff" stroke="#9a9a9a" stroke-width="0.5"/>
<text x="497.80" y="264.30" font-size="6.6" fill="#101010" text-anchor="start" textLength="1.50" lengthAdjust="spacingAndGlyphs" stroke="#101010" stroke-width="0.15">1</text>
<rect x="499.60" y="266.00" width="0.80" height="3.50" fill="#d0d0d0"/>
<polygon points="500.00,257.5 503.15,257.5 504.50,262.00 503.15,266.5 500.00,266.5" fill="#ffffff" stroke="#9a9a9a" stroke-width="0.5"/>
<text x="500.80" y="264.30" font-size="6.6" fill="#101010" text-anchor="start" textLength="1.55" lengthAdjust="spacingAndGlyphs" stroke="#101010" stroke-width="0.15">18</text>
<rect x="503.60" y="266.00" width="0.80" height="3.50" fill="#d0d0d0"/>
<polygon points="504.00,257.5 515.60,257.5 517.80,262.00 515.60,266.5 504.00,266.5" fill="#ffffff" stroke="#9a9a9a" stroke-width="0.5"/>
<text x="504.80" y="264.30" font-size="6.6" fill="#101010" text-anchor="start" textLength="10.00" lengthAdjust="spacingAndGlyphs" stroke="#101010" stroke-width="0.15">20:00</text>
<rect x="529.60" y="266.00" width="0.80" height="3.50" fill="#d0d0d0"/>
<polygon points="530.00,257.5 541.30,257.5 543.50,262.00 541.30,266.5 530.00,266.5" fill="#ffffff" stroke="#9a9a9a" stroke-width="0.5"/>
<text x="530.80" y="264.30" font-size="6.6" fill="#101010" text-anchor="start" textLength="9.70" lengthAdjust="spacingAndGlyphs" stroke="#101010" stroke-width="0.15">02:50</text>
<rect x="578.00" y="266.00" width="0.80" height="3.50" fill="#d0d0d0"/>
<polygon points="578.40,257.5 581.97,257.5 583.50,262.00 581.97,266.5 578.40,266.5" fill="#ffffff" stroke="#9a9a9a" stroke-width="0.5"/>
<text x="579.20" y="264.30" font-size="6.6" fill="#101010" text-anchor="start" textLength="1.97" lengthAdjust="spacingAndGlyphs" stroke="#101010" stroke-width="0.15">15</text>
<rect x="583.60" y="266.00" width="0.80" height="3.50" fill="#d0d0d0"/>
<polygon points="584.00,257.5 585.75,257.5 586.50,262.00 585.75,266.5 584.00,266.5" fill="#ffffff" stroke="#9a9a9a" stroke-width="0.5"/>
<text x="584.80" y="264.30" font-size="6.6" fill="#101010" text-anchor="start" textLength="1.50" lengthAdjust="spacingAndGlyphs" stroke="#101010" stroke-width="0.15">1</text>
<rect x="585.60" y="266.00" width="0.80" height="3.50" fill="#d0d0d0"/>
<polygon points="586.00,257.5 589.15,257.5 590.50,262.00 589.15,266.5 586.00,266.5" fill="#ffffff" stroke="#9a9a9a" stroke-width="0.5"/>
<text x="586.80" y="264.30" font-size="6.6" fill="#101010" text-anchor="start" textLength="1.55" lengthAdjust="spacingAndGlyphs" stroke="#101010" stroke-width="0.15">18</text>
<rect x="589.60" y="266.00" width="0.80" height="3.50" fill="#d0d0d0"/>
<polygon points="590.00,257.5 606.60,257.5 608.80,262.00 606.60,266.5 590.00,266.5" fill="#ffffff" stroke="#9a9a9a" stroke-width="0.5"/>
<text x="590.80" y="264.30" font-size="6.6" fill="#101010" text-anchor="start" textLength="15.00" lengthAdjust="spacingAndGlyphs" stroke="#101010" stroke-width="0.15">20:00</text>
<text style="will-change:transform" transform="translate(394.20,268.00) rotate(-90) scale(1,0.72)" x="0" y="0" font-size="6.6" fill="#ffffff" stroke="#ffffff" stroke-width="0.06" textLength="35.00" lengthAdjust="spacingAndGlyphs">Retail Sales</text>
<text style="will-change:transform" transform="translate(417.00,255.00) rotate(-90) scale(1,0.72)" x="0" y="0" font-size="6.9" fill="#ffffff" stroke="#ffffff" stroke-width="0.06">Chair Powell Speaks</text>
<text style="will-change:transform" transform="translate(435.20,268.00) rotate(-90) scale(1,0.72)" x="0" y="0" font-size="6.6" fill="#ffffff" stroke="#ffffff" stroke-width="0.06" textLength="24.40" lengthAdjust="spacingAndGlyphs">CPI y/y</text>
<text style="will-change:transform" transform="translate(485.80,265.00) rotate(-90) scale(1,0.72)" x="0" y="0" font-size="6.6" fill="#ffffff" stroke="#ffffff" stroke-width="0.06" textLength="44.50" lengthAdjust="spacingAndGlyphs">Building Permits</text>
<text style="will-change:transform" transform="translate(493.90,256.00) rotate(-90) scale(1,0.72)" x="0" y="0" font-size="6.6" fill="#ffffff" stroke="#ffffff" stroke-width="0.06" textLength="74.50" lengthAdjust="spacingAndGlyphs">Crude Oil Stocks Change</text>
<rect x="0.00" y="285.50" width="640.00" height="1.70" fill="#ffffff"/>
<rect x="0.00" y="287.20" width="640.00" height="0.80" fill="#101010"/>
<rect x="0.00" y="288.00" width="640.00" height="1.00" fill="#fafafa"/>
<rect x="0.00" y="289.00" width="640.00" height="16.50" fill="#f0f0f0"/>
<text x="6.50" y="298.50" font-size="8.9" fill="#5c5c5c" text-anchor="start" textLength="27.50" lengthAdjust="spacingAndGlyphs" stroke="#5c5c5c" stroke-width="0.1">EURUSD,H1</text>
<text x="45.50" y="298.50" font-size="8.9" fill="#5c5c5c" text-anchor="start" textLength="29.50" lengthAdjust="spacingAndGlyphs" stroke="#5c5c5c" stroke-width="0.1">XAUUSD,H1</text>
<text x="86.00" y="298.50" font-size="8.9" fill="#5c5c5c" text-anchor="start" textLength="29.00" lengthAdjust="spacingAndGlyphs" stroke="#5c5c5c" stroke-width="0.1">GBPUSD,H1</text>
<rect x="120.80" y="287.20" width="37.70" height="14.30" fill="#101010"/>
<rect x="121.50" y="285.50" width="36.30" height="15.10" fill="#ffffff"/>
<text x="125.80" y="298.50" font-size="8.9" fill="#101010" text-anchor="start" textLength="27.20" lengthAdjust="spacingAndGlyphs" stroke="#101010" stroke-width="0.15">USDJPY,H1</text>
<text x="164.80" y="298.50" font-size="8.9" fill="#5c5c5c" text-anchor="start" textLength="28.60" lengthAdjust="spacingAndGlyphs" stroke="#5c5c5c" stroke-width="0.1">GBPAUD,H1</text>
<rect x="40.00" y="290.00" width="1.00" height="10.00" fill="#b8b8b8"/>
<rect x="80.00" y="290.00" width="1.00" height="10.00" fill="#b8b8b8"/>
<rect x="120.00" y="290.00" width="1.00" height="10.00" fill="#b8b8b8"/>
<polygon points="625.3,293.3 625.3,297.4 623.0,295.35" fill="#a4a4a4"/>
<polygon points="633.0,293.3 633.0,297.4 635.3,295.35" fill="#a4a4a4"/>
<rect x="0.00" y="305.50" width="640.00" height="156.00" fill="#ffffff"/>
<rect x="0.00" y="305.00" width="6.20" height="175.00" fill="#f0f0f0"/>
<rect x="0.00" y="316.00" width="6.20" height="162.00" fill="#d8e2ec"/>
<path d="M1.2,308.2 L4.6,311.9 M4.6,308.2 L1.2,311.9" stroke="#101010" stroke-width="1.15"/>
<text transform="translate(5.2,476) rotate(-90)" font-size="6.8" fill="#1a1a1a" textLength="28" lengthAdjust="spacingAndGlyphs" font-weight="bold">Toolbox</text>
<rect x="6.20" y="305.00" width="633.80" height="1.00" fill="#c8c8c8"/>
<rect x="6.00" y="305.00" width="0.80" height="156.50" fill="#c8c8c8"/>
<text x="9.70" y="318.70" font-size="10.0" fill="#1a1a1a" text-anchor="start" textLength="12.10" lengthAdjust="spacingAndGlyphs" stroke="#1a1a1a" stroke-width="0.15">Time</text>
<text x="46.80" y="318.70" font-size="10.0" fill="#1a1a1a" text-anchor="start" textLength="23.00" lengthAdjust="spacingAndGlyphs" stroke="#1a1a1a" stroke-width="0.15">Currency</text>
<text x="74.40" y="318.70" font-size="10.0" fill="#1a1a1a" text-anchor="start" textLength="14.50" lengthAdjust="spacingAndGlyphs" stroke="#1a1a1a" stroke-width="0.15">Event</text>
<text x="376.60" y="318.70" font-size="10.0" fill="#1a1a1a" text-anchor="start" textLength="18.20" lengthAdjust="spacingAndGlyphs" stroke="#1a1a1a" stroke-width="0.15">Priority</text>
<text x="426.00" y="318.70" font-size="10.0" fill="#1a1a1a" text-anchor="start" textLength="16.20" lengthAdjust="spacingAndGlyphs" stroke="#1a1a1a" stroke-width="0.15">Period</text>
<text x="490.20" y="318.70" font-size="10.0" fill="#1a1a1a" text-anchor="start" textLength="13.80" lengthAdjust="spacingAndGlyphs" stroke="#1a1a1a" stroke-width="0.15">Actual</text>
<text x="547.60" y="318.70" font-size="10.0" fill="#1a1a1a" text-anchor="start" textLength="19.00" lengthAdjust="spacingAndGlyphs" stroke="#1a1a1a" stroke-width="0.15">Forecast</text>
<text x="610.00" y="318.70" font-size="10.0" fill="#1a1a1a" text-anchor="start" textLength="19.00" lengthAdjust="spacingAndGlyphs" stroke="#1a1a1a" stroke-width="0.15">Previous</text>
<rect x="42.90" y="306.00" width="0.80" height="17.50" fill="#ececec"/>
<rect x="72.10" y="306.00" width="0.80" height="17.50" fill="#ececec"/>
<rect x="373.00" y="306.00" width="0.80" height="17.50" fill="#ececec"/>
<rect x="404.30" y="306.00" width="0.80" height="17.50" fill="#ececec"/>
<rect x="444.00" y="306.00" width="0.80" height="17.50" fill="#ececec"/>
<rect x="505.85" y="306.00" width="0.80" height="17.50" fill="#ececec"/>
<rect x="567.60" y="306.00" width="0.80" height="17.50" fill="#ececec"/>
<rect x="629.60" y="306.00" width="0.80" height="17.50" fill="#ececec"/>
<rect x="6.80" y="339.00" width="623.20" height="1.00" fill="#dcdcdc"/>
<rect x="42.90" y="324.30" width="0.80" height="15.20" fill="#ececec"/>
<rect x="72.10" y="324.30" width="0.80" height="15.20" fill="#ececec"/>
<rect x="373.00" y="324.30" width="0.80" height="15.20" fill="#ececec"/>
<rect x="404.30" y="324.30" width="0.80" height="15.20" fill="#ececec"/>
<rect x="444.00" y="324.30" width="0.80" height="15.20" fill="#ececec"/>
<rect x="505.85" y="324.30" width="0.80" height="15.20" fill="#ececec"/>
<rect x="567.60" y="324.30" width="0.80" height="15.20" fill="#ececec"/>
<rect x="629.60" y="324.30" width="0.80" height="15.20" fill="#ececec"/>
<rect x="7.00" y="327.80" width="7.80" height="8.90" fill="#ffffff"/>
<rect x="7.00" y="327.80" width="2.20" height="8.90" fill="#e8141c"/>
<rect x="12.60" y="327.80" width="2.20" height="8.90" fill="#e8141c"/>
<rect x="10.20" y="331.00" width="1.40" height="2.40" fill="#e8141c"/>
<text x="16.80" y="335.60" font-size="10.0" fill="#1a1a1a" text-anchor="start" textLength="12.20" lengthAdjust="spacingAndGlyphs" stroke="#1a1a1a" stroke-width="0.15">15:30</text>
<text x="45.80" y="335.60" font-size="10.0" fill="#1a1a1a" text-anchor="start" textLength="11.20" lengthAdjust="spacingAndGlyphs" stroke="#1a1a1a" stroke-width="0.15">CAD</text>
<text x="73.90" y="335.60" font-size="10.0" fill="#1a1a1a" text-anchor="start" textLength="41.40" lengthAdjust="spacingAndGlyphs" stroke="#1a1a1a" stroke-width="0.15">Trimmed CPI y/y</text>
<rect x="387.2" y="327.70" width="4.6" height="7.6" fill="#e0e0e0" stroke="#a8a8a8" stroke-width="0.8"/>
<text x="434.00" y="335.60" font-size="10.0" fill="#1a1a1a" text-anchor="start" textLength="8.20" lengthAdjust="spacingAndGlyphs" stroke="#1a1a1a" stroke-width="0.15">Apr</text>
<text x="554.40" y="335.60" font-size="10.0" fill="#1a1a1a" text-anchor="start" textLength="12.20" lengthAdjust="spacingAndGlyphs" stroke="#1a1a1a" stroke-width="0.15">5.1%</text>
<text x="616.80" y="335.60" font-size="10.0" fill="#1a1a1a" text-anchor="start" textLength="12.20" lengthAdjust="spacingAndGlyphs" stroke="#1a1a1a" stroke-width="0.15">4.7%</text>
<rect x="6.80" y="354.20" width="623.20" height="1.00" fill="#dcdcdc"/>
<rect x="42.90" y="339.50" width="0.80" height="15.20" fill="#ececec"/>
<rect x="72.10" y="339.50" width="0.80" height="15.20" fill="#ececec"/>
<rect x="373.00" y="339.50" width="0.80" height="15.20" fill="#ececec"/>
<rect x="404.30" y="339.50" width="0.80" height="15.20" fill="#ececec"/>
<rect x="444.00" y="339.50" width="0.80" height="15.20" fill="#ececec"/>
<rect x="7.00" y="343.00" width="7.80" height="3.00" fill="#202020"/>
<rect x="7.00" y="346.00" width="7.80" height="3.00" fill="#e8141c"/>
<rect x="7.00" y="349.00" width="7.80" height="2.90" fill="#ffcc00"/>
<text x="16.80" y="350.80" font-size="10.0" fill="#1a1a1a" text-anchor="start" textLength="12.20" lengthAdjust="spacingAndGlyphs" stroke="#1a1a1a" stroke-width="0.15">15:30</text>
<text x="45.80" y="350.80" font-size="10.0" fill="#1a1a1a" text-anchor="start" textLength="9.90" lengthAdjust="spacingAndGlyphs" stroke="#1a1a1a" stroke-width="0.15">EUR</text>
<text x="73.90" y="350.80" font-size="10.0" fill="#1a1a1a" text-anchor="start" textLength="103.20" lengthAdjust="spacingAndGlyphs" stroke="#1a1a1a" stroke-width="0.15">Bbk Executive Board Member Balz Speech</text>
<rect x="387.2" y="342.90" width="4.6" height="7.6" fill="#ffc800" stroke="#e0a000" stroke-width="0.8"/>
<rect x="6.80" y="369.40" width="623.20" height="1.00" fill="#dcdcdc"/>
<rect x="42.90" y="354.70" width="0.80" height="15.20" fill="#ececec"/>
<rect x="72.10" y="354.70" width="0.80" height="15.20" fill="#ececec"/>
<rect x="373.00" y="354.70" width="0.80" height="15.20" fill="#ececec"/>
<rect x="404.30" y="354.70" width="0.80" height="15.20" fill="#ececec"/>
<rect x="444.00" y="354.70" width="0.80" height="15.20" fill="#ececec"/>
<rect x="505.85" y="354.70" width="0.80" height="15.20" fill="#ececec"/>
<rect x="567.60" y="354.70" width="0.80" height="15.20" fill="#ececec"/>
<rect x="629.60" y="354.70" width="0.80" height="15.20" fill="#ececec"/>
<rect x="7.00" y="358.20" width="7.80" height="1.00" fill="#e04040"/>
<rect x="7.00" y="359.20" width="7.80" height="0.80" fill="#f4f4f4"/>
<rect x="7.00" y="360.00" width="7.80" height="1.00" fill="#e04040"/>
<rect x="7.00" y="361.00" width="7.80" height="0.80" fill="#f4f4f4"/>
<rect x="7.00" y="361.80" width="7.80" height="1.00" fill="#e04040"/>
<rect x="7.00" y="362.80" width="7.80" height="0.80" fill="#f4f4f4"/>
<rect x="7.00" y="363.60" width="7.80" height="1.00" fill="#e04040"/>
<rect x="7.00" y="364.60" width="7.80" height="0.80" fill="#f4f4f4"/>
<rect x="7.00" y="365.40" width="7.80" height="1.00" fill="#e04040"/>
<rect x="7.00" y="366.40" width="7.80" height="0.80" fill="#f4f4f4"/>
<rect x="7.00" y="358.20" width="3.80" height="4.60" fill="#5060b0"/>
<text x="16.80" y="366.00" font-size="10.0" fill="#1a1a1a" text-anchor="start" textLength="12.20" lengthAdjust="spacingAndGlyphs" stroke="#1a1a1a" stroke-width="0.15">15:30</text>
<text x="45.80" y="366.00" font-size="10.0" fill="#1a1a1a" text-anchor="start" textLength="10.40" lengthAdjust="spacingAndGlyphs" stroke="#1a1a1a" stroke-width="0.15">USD</text>
<text x="73.90" y="366.00" font-size="10.0" fill="#1a1a1a" text-anchor="start" textLength="36.20" lengthAdjust="spacingAndGlyphs" stroke="#1a1a1a" stroke-width="0.15">Housing Starts</text>
<rect x="387.2" y="358.10" width="4.6" height="7.6" fill="#ffc800" stroke="#e0a000" stroke-width="0.8"/>
<text x="434.00" y="366.00" font-size="10.0" fill="#1a1a1a" text-anchor="start" textLength="8.20" lengthAdjust="spacingAndGlyphs" stroke="#1a1a1a" stroke-width="0.15">Apr</text>
<text x="546.85" y="366.00" font-size="10.0" fill="#1a1a1a" text-anchor="start" textLength="19.75" lengthAdjust="spacingAndGlyphs" stroke="#1a1a1a" stroke-width="0.15">1.788 M</text>
<text x="609.25" y="366.00" font-size="10.0" fill="#1a1a1a" text-anchor="start" textLength="19.75" lengthAdjust="spacingAndGlyphs" stroke="#1a1a1a" stroke-width="0.15">1.793 M</text>
<rect x="6.80" y="384.60" width="623.20" height="1.00" fill="#dcdcdc"/>
<rect x="42.90" y="369.90" width="0.80" height="15.20" fill="#ececec"/>
<rect x="72.10" y="369.90" width="0.80" height="15.20" fill="#ececec"/>
<rect x="373.00" y="369.90" width="0.80" height="15.20" fill="#ececec"/>
<rect x="404.30" y="369.90" width="0.80" height="15.20" fill="#ececec"/>
<rect x="444.00" y="369.90" width="0.80" height="15.20" fill="#ececec"/>
<rect x="505.85" y="369.90" width="0.80" height="15.20" fill="#ececec"/>
<rect x="567.60" y="369.90" width="0.80" height="15.20" fill="#ececec"/>
<rect x="629.60" y="369.90" width="0.80" height="15.20" fill="#ececec"/>
<rect x="7.00" y="373.40" width="7.80" height="1.00" fill="#e04040"/>
<rect x="7.00" y="374.40" width="7.80" height="0.80" fill="#f4f4f4"/>
<rect x="7.00" y="375.20" width="7.80" height="1.00" fill="#e04040"/>
<rect x="7.00" y="376.20" width="7.80" height="0.80" fill="#f4f4f4"/>
<rect x="7.00" y="377.00" width="7.80" height="1.00" fill="#e04040"/>
<rect x="7.00" y="378.00" width="7.80" height="0.80" fill="#f4f4f4"/>
<rect x="7.00" y="378.80" width="7.80" height="1.00" fill="#e04040"/>
<rect x="7.00" y="379.80" width="7.80" height="0.80" fill="#f4f4f4"/>
<rect x="7.00" y="380.60" width="7.80" height="1.00" fill="#e04040"/>
<rect x="7.00" y="381.60" width="7.80" height="0.80" fill="#f4f4f4"/>
<rect x="7.00" y="373.40" width="3.80" height="4.60" fill="#5060b0"/>
<text x="16.80" y="381.20" font-size="10.0" fill="#1a1a1a" text-anchor="start" textLength="12.20" lengthAdjust="spacingAndGlyphs" stroke="#1a1a1a" stroke-width="0.15">15:30</text>
<text x="45.80" y="381.20" font-size="10.0" fill="#1a1a1a" text-anchor="start" textLength="10.40" lengthAdjust="spacingAndGlyphs" stroke="#1a1a1a" stroke-width="0.15">USD</text>
<text x="73.90" y="381.20" font-size="10.0" fill="#1a1a1a" text-anchor="start" textLength="41.20" lengthAdjust="spacingAndGlyphs" stroke="#1a1a1a" stroke-width="0.15">Building Permits</text>
<rect x="387.2" y="373.30" width="4.6" height="7.6" fill="#ffe8e8" stroke="#e05050" stroke-width="0.8"/>
<text x="434.00" y="381.20" font-size="10.0" fill="#1a1a1a" text-anchor="start" textLength="8.20" lengthAdjust="spacingAndGlyphs" stroke="#1a1a1a" stroke-width="0.15">Apr</text>
<text x="546.85" y="381.20" font-size="10.0" fill="#1a1a1a" text-anchor="start" textLength="19.75" lengthAdjust="spacingAndGlyphs" stroke="#1a1a1a" stroke-width="0.15">1.873 M</text>
<text x="609.25" y="381.20" font-size="10.0" fill="#1a1a1a" text-anchor="start" textLength="19.75" lengthAdjust="spacingAndGlyphs" stroke="#1a1a1a" stroke-width="0.15">1.873 M</text>
<rect x="6.80" y="399.80" width="623.20" height="1.00" fill="#dcdcdc"/>
<rect x="42.90" y="385.10" width="0.80" height="15.20" fill="#ececec"/>
<rect x="72.10" y="385.10" width="0.80" height="15.20" fill="#ececec"/>
<rect x="373.00" y="385.10" width="0.80" height="15.20" fill="#ececec"/>
<rect x="404.30" y="385.10" width="0.80" height="15.20" fill="#ececec"/>
<rect x="444.00" y="385.10" width="0.80" height="15.20" fill="#ececec"/>
<rect x="505.85" y="385.10" width="0.80" height="15.20" fill="#ececec"/>
<rect x="567.60" y="385.10" width="0.80" height="15.20" fill="#ececec"/>
<rect x="629.60" y="385.10" width="0.80" height="15.20" fill="#ececec"/>
<rect x="7.00" y="388.60" width="7.80" height="1.00" fill="#e04040"/>
<rect x="7.00" y="389.60" width="7.80" height="0.80" fill="#f4f4f4"/>
<rect x="7.00" y="390.40" width="7.80" height="1.00" fill="#e04040"/>
<rect x="7.00" y="391.40" width="7.80" height="0.80" fill="#f4f4f4"/>
<rect x="7.00" y="392.20" width="7.80" height="1.00" fill="#e04040"/>
<rect x="7.00" y="393.20" width="7.80" height="0.80" fill="#f4f4f4"/>
<rect x="7.00" y="394.00" width="7.80" height="1.00" fill="#e04040"/>
<rect x="7.00" y="395.00" width="7.80" height="0.80" fill="#f4f4f4"/>
<rect x="7.00" y="395.80" width="7.80" height="1.00" fill="#e04040"/>
<rect x="7.00" y="396.80" width="7.80" height="0.80" fill="#f4f4f4"/>
<rect x="7.00" y="388.60" width="3.80" height="4.60" fill="#5060b0"/>
<text x="16.80" y="396.40" font-size="10.0" fill="#1a1a1a" text-anchor="start" textLength="12.20" lengthAdjust="spacingAndGlyphs" stroke="#1a1a1a" stroke-width="0.15">15:30</text>
<text x="45.80" y="396.40" font-size="10.0" fill="#1a1a1a" text-anchor="start" textLength="10.40" lengthAdjust="spacingAndGlyphs" stroke="#1a1a1a" stroke-width="0.15">USD</text>
<text x="73.90" y="396.40" font-size="10.0" fill="#1a1a1a" text-anchor="start" textLength="50.00" lengthAdjust="spacingAndGlyphs" stroke="#1a1a1a" stroke-width="0.15">Housing Starts m/m</text>
<rect x="387.2" y="388.50" width="4.6" height="7.6" fill="#ffc800" stroke="#e0a000" stroke-width="0.8"/>
<text x="434.00" y="396.40" font-size="10.0" fill="#1a1a1a" text-anchor="start" textLength="8.20" lengthAdjust="spacingAndGlyphs" stroke="#1a1a1a" stroke-width="0.15">Apr</text>
<text x="554.40" y="396.40" font-size="10.0" fill="#1a1a1a" text-anchor="start" textLength="12.20" lengthAdjust="spacingAndGlyphs" stroke="#1a1a1a" stroke-width="0.15">0.3%</text>
<text x="616.80" y="396.40" font-size="10.0" fill="#1a1a1a" text-anchor="start" textLength="12.20" lengthAdjust="spacingAndGlyphs" stroke="#1a1a1a" stroke-width="0.15">0.3%</text>
<rect x="6.80" y="415.00" width="623.20" height="1.00" fill="#dcdcdc"/>
<rect x="42.90" y="400.30" width="0.80" height="15.20" fill="#ececec"/>
<rect x="72.10" y="400.30" width="0.80" height="15.20" fill="#ececec"/>
<rect x="373.00" y="400.30" width="0.80" height="15.20" fill="#ececec"/>
<rect x="404.30" y="400.30" width="0.80" height="15.20" fill="#ececec"/>
<rect x="444.00" y="400.30" width="0.80" height="15.20" fill="#ececec"/>
<rect x="505.85" y="400.30" width="0.80" height="15.20" fill="#ececec"/>
<rect x="567.60" y="400.30" width="0.80" height="15.20" fill="#ececec"/>
<rect x="629.60" y="400.30" width="0.80" height="15.20" fill="#ececec"/>
<rect x="7.00" y="403.80" width="7.80" height="1.00" fill="#e04040"/>
<rect x="7.00" y="404.80" width="7.80" height="0.80" fill="#f4f4f4"/>
<rect x="7.00" y="405.60" width="7.80" height="1.00" fill="#e04040"/>
<rect x="7.00" y="406.60" width="7.80" height="0.80" fill="#f4f4f4"/>
<rect x="7.00" y="407.40" width="7.80" height="1.00" fill="#e04040"/>
<rect x="7.00" y="408.40" width="7.80" height="0.80" fill="#f4f4f4"/>
<rect x="7.00" y="409.20" width="7.80" height="1.00" fill="#e04040"/>
<rect x="7.00" y="410.20" width="7.80" height="0.80" fill="#f4f4f4"/>
<rect x="7.00" y="411.00" width="7.80" height="1.00" fill="#e04040"/>
<rect x="7.00" y="412.00" width="7.80" height="0.80" fill="#f4f4f4"/>
<rect x="7.00" y="403.80" width="3.80" height="4.60" fill="#5060b0"/>
<text x="16.80" y="411.60" font-size="10.0" fill="#1a1a1a" text-anchor="start" textLength="12.20" lengthAdjust="spacingAndGlyphs" stroke="#1a1a1a" stroke-width="0.15">15:30</text>
<text x="45.80" y="411.60" font-size="10.0" fill="#1a1a1a" text-anchor="start" textLength="10.40" lengthAdjust="spacingAndGlyphs" stroke="#1a1a1a" stroke-width="0.15">USD</text>
<text x="73.90" y="411.60" font-size="10.0" fill="#1a1a1a" text-anchor="start" textLength="55.20" lengthAdjust="spacingAndGlyphs" stroke="#1a1a1a" stroke-width="0.15">Building Permits m/m</text>
<rect x="387.2" y="403.70" width="4.6" height="7.6" fill="#ffc800" stroke="#e0a000" stroke-width="0.8"/>
<text x="434.00" y="411.60" font-size="10.0" fill="#1a1a1a" text-anchor="start" textLength="8.20" lengthAdjust="spacingAndGlyphs" stroke="#1a1a1a" stroke-width="0.15">Apr</text>
<text x="554.40" y="411.60" font-size="10.0" fill="#1a1a1a" text-anchor="start" textLength="12.20" lengthAdjust="spacingAndGlyphs" stroke="#1a1a1a" stroke-width="0.15">1.0%</text>
<text x="616.80" y="411.60" font-size="10.0" fill="#1a1a1a" text-anchor="start" textLength="12.20" lengthAdjust="spacingAndGlyphs" stroke="#1a1a1a" stroke-width="0.15">0.4%</text>
<rect x="6.80" y="430.20" width="623.20" height="1.00" fill="#dcdcdc"/>
<rect x="42.90" y="415.50" width="0.80" height="15.20" fill="#ececec"/>
<rect x="72.10" y="415.50" width="0.80" height="15.20" fill="#ececec"/>
<rect x="373.00" y="415.50" width="0.80" height="15.20" fill="#ececec"/>
<rect x="404.30" y="415.50" width="0.80" height="15.20" fill="#ececec"/>
<rect x="444.00" y="415.50" width="0.80" height="15.20" fill="#ececec"/>
<rect x="505.85" y="415.50" width="0.80" height="15.20" fill="#ececec"/>
<rect x="567.60" y="415.50" width="0.80" height="15.20" fill="#ececec"/>
<rect x="629.60" y="415.50" width="0.80" height="15.20" fill="#ececec"/>
<rect x="7.00" y="419.00" width="7.80" height="1.00" fill="#e04040"/>
<rect x="7.00" y="420.00" width="7.80" height="0.80" fill="#f4f4f4"/>
<rect x="7.00" y="420.80" width="7.80" height="1.00" fill="#e04040"/>
<rect x="7.00" y="421.80" width="7.80" height="0.80" fill="#f4f4f4"/>
<rect x="7.00" y="422.60" width="7.80" height="1.00" fill="#e04040"/>
<rect x="7.00" y="423.60" width="7.80" height="0.80" fill="#f4f4f4"/>
<rect x="7.00" y="424.40" width="7.80" height="1.00" fill="#e04040"/>
<rect x="7.00" y="425.40" width="7.80" height="0.80" fill="#f4f4f4"/>
<rect x="7.00" y="426.20" width="7.80" height="1.00" fill="#e04040"/>
<rect x="7.00" y="427.20" width="7.80" height="0.80" fill="#f4f4f4"/>
<rect x="7.00" y="419.00" width="3.80" height="4.60" fill="#5060b0"/>
<text x="16.80" y="426.80" font-size="10.0" fill="#1a1a1a" text-anchor="start" textLength="12.20" lengthAdjust="spacingAndGlyphs" stroke="#1a1a1a" stroke-width="0.15">17:30</text>
<text x="45.80" y="426.80" font-size="10.0" fill="#1a1a1a" text-anchor="start" textLength="10.40" lengthAdjust="spacingAndGlyphs" stroke="#1a1a1a" stroke-width="0.15">USD</text>
<text x="73.90" y="426.80" font-size="10.0" fill="#1a1a1a" text-anchor="start" textLength="71.20" lengthAdjust="spacingAndGlyphs" stroke="#1a1a1a" stroke-width="0.15">EIA Crude Oil Stocks Change</text>
<rect x="387.2" y="418.90" width="4.6" height="7.6" fill="#ffe8e8" stroke="#e05050" stroke-width="0.8"/>
<text x="425.20" y="426.80" font-size="10.0" fill="#1a1a1a" text-anchor="start" textLength="17.00" lengthAdjust="spacingAndGlyphs" stroke="#1a1a1a" stroke-width="0.15">May 13</text>
<text x="546.85" y="426.80" font-size="10.0" fill="#1a1a1a" text-anchor="start" textLength="19.75" lengthAdjust="spacingAndGlyphs" stroke="#1a1a1a" stroke-width="0.15">0.750 M</text>
<text x="609.25" y="426.80" font-size="10.0" fill="#1a1a1a" text-anchor="start" textLength="19.75" lengthAdjust="spacingAndGlyphs" stroke="#1a1a1a" stroke-width="0.15">8.487 M</text>
<rect x="6.80" y="445.40" width="623.20" height="1.00" fill="#dcdcdc"/>
<rect x="42.90" y="430.70" width="0.80" height="15.20" fill="#ececec"/>
<rect x="72.10" y="430.70" width="0.80" height="15.20" fill="#ececec"/>
<rect x="373.00" y="430.70" width="0.80" height="15.20" fill="#ececec"/>
<rect x="404.30" y="430.70" width="0.80" height="15.20" fill="#ececec"/>
<rect x="444.00" y="430.70" width="0.80" height="15.20" fill="#ececec"/>
<rect x="505.85" y="430.70" width="0.80" height="15.20" fill="#ececec"/>
<rect x="567.60" y="430.70" width="0.80" height="15.20" fill="#ececec"/>
<rect x="629.60" y="430.70" width="0.80" height="15.20" fill="#ececec"/>
<rect x="7.00" y="434.20" width="7.80" height="1.00" fill="#e04040"/>
<rect x="7.00" y="435.20" width="7.80" height="0.80" fill="#f4f4f4"/>
<rect x="7.00" y="436.00" width="7.80" height="1.00" fill="#e04040"/>
<rect x="7.00" y="437.00" width="7.80" height="0.80" fill="#f4f4f4"/>
<rect x="7.00" y="437.80" width="7.80" height="1.00" fill="#e04040"/>
<rect x="7.00" y="438.80" width="7.80" height="0.80" fill="#f4f4f4"/>
<rect x="7.00" y="439.60" width="7.80" height="1.00" fill="#e04040"/>
<rect x="7.00" y="440.60" width="7.80" height="0.80" fill="#f4f4f4"/>
<rect x="7.00" y="441.40" width="7.80" height="1.00" fill="#e04040"/>
<rect x="7.00" y="442.40" width="7.80" height="0.80" fill="#f4f4f4"/>
<rect x="7.00" y="434.20" width="3.80" height="4.60" fill="#5060b0"/>
<text x="16.80" y="442.00" font-size="10.0" fill="#1a1a1a" text-anchor="start" textLength="12.20" lengthAdjust="spacingAndGlyphs" stroke="#1a1a1a" stroke-width="0.15">17:30</text>
<text x="45.80" y="442.00" font-size="10.0" fill="#1a1a1a" text-anchor="start" textLength="10.40" lengthAdjust="spacingAndGlyphs" stroke="#1a1a1a" stroke-width="0.15">USD</text>
<text x="73.90" y="442.00" font-size="10.0" fill="#1a1a1a" text-anchor="start" textLength="93.20" lengthAdjust="spacingAndGlyphs" stroke="#1a1a1a" stroke-width="0.15">EIA Cushing Crude Oil Stocks Change</text>
<rect x="387.2" y="434.10" width="4.6" height="7.6" fill="#ffc800" stroke="#e0a000" stroke-width="0.8"/>
<text x="425.20" y="442.00" font-size="10.0" fill="#1a1a1a" text-anchor="start" textLength="17.00" lengthAdjust="spacingAndGlyphs" stroke="#1a1a1a" stroke-width="0.15">May 13</text>
<text x="543.80" y="442.00" font-size="10.0" fill="#1a1a1a" text-anchor="start" textLength="22.80" lengthAdjust="spacingAndGlyphs" stroke="#1a1a1a" stroke-width="0.15">-0.901 M</text>
<text x="606.20" y="442.00" font-size="10.0" fill="#1a1a1a" text-anchor="start" textLength="22.80" lengthAdjust="spacingAndGlyphs" stroke="#1a1a1a" stroke-width="0.15">-0.587 M</text>
<rect x="6.80" y="460.60" width="623.20" height="1.00" fill="#dcdcdc"/>
<rect x="42.90" y="445.90" width="0.80" height="15.20" fill="#ececec"/>
<rect x="72.10" y="445.90" width="0.80" height="15.20" fill="#ececec"/>
<rect x="373.00" y="445.90" width="0.80" height="15.20" fill="#ececec"/>
<rect x="404.30" y="445.90" width="0.80" height="15.20" fill="#ececec"/>
<rect x="444.00" y="445.90" width="0.80" height="15.20" fill="#ececec"/>
<rect x="505.85" y="445.90" width="0.80" height="15.20" fill="#ececec"/>
<rect x="567.60" y="445.90" width="0.80" height="15.20" fill="#ececec"/>
<rect x="629.60" y="445.90" width="0.80" height="15.20" fill="#ececec"/>
<rect x="7.00" y="449.40" width="7.80" height="1.00" fill="#e04040"/>
<rect x="7.00" y="450.40" width="7.80" height="0.80" fill="#f4f4f4"/>
<rect x="7.00" y="451.20" width="7.80" height="1.00" fill="#e04040"/>
<rect x="7.00" y="452.20" width="7.80" height="0.80" fill="#f4f4f4"/>
<rect x="7.00" y="453.00" width="7.80" height="1.00" fill="#e04040"/>
<rect x="7.00" y="454.00" width="7.80" height="0.80" fill="#f4f4f4"/>
<rect x="7.00" y="454.80" width="7.80" height="1.00" fill="#e04040"/>
<rect x="7.00" y="455.80" width="7.80" height="0.80" fill="#f4f4f4"/>
<rect x="7.00" y="456.60" width="7.80" height="1.00" fill="#e04040"/>
<rect x="7.00" y="457.60" width="7.80" height="0.80" fill="#f4f4f4"/>
<rect x="7.00" y="449.40" width="3.80" height="4.60" fill="#5060b0"/>
<text x="16.80" y="457.20" font-size="10.0" fill="#1a1a1a" text-anchor="start" textLength="12.20" lengthAdjust="spacingAndGlyphs" stroke="#1a1a1a" stroke-width="0.15">17:30</text>
<text x="45.80" y="457.20" font-size="10.0" fill="#1a1a1a" text-anchor="start" textLength="10.40" lengthAdjust="spacingAndGlyphs" stroke="#1a1a1a" stroke-width="0.15">USD</text>
<text x="73.90" y="457.20" font-size="10.0" fill="#1a1a1a" text-anchor="start" textLength="74.20" lengthAdjust="spacingAndGlyphs" stroke="#1a1a1a" stroke-width="0.15">EIA Crude Oil Imports Change</text>
<rect x="387.2" y="449.30" width="4.6" height="7.6" fill="#e0e0e0" stroke="#a8a8a8" stroke-width="0.8"/>
<text x="425.20" y="457.20" font-size="10.0" fill="#1a1a1a" text-anchor="start" textLength="17.00" lengthAdjust="spacingAndGlyphs" stroke="#1a1a1a" stroke-width="0.15">May 13</text>
<text x="543.80" y="457.20" font-size="10.0" fill="#1a1a1a" text-anchor="start" textLength="22.80" lengthAdjust="spacingAndGlyphs" stroke="#1a1a1a" stroke-width="0.15">-1.065 M</text>
<text x="609.25" y="457.20" font-size="10.0" fill="#1a1a1a" text-anchor="start" textLength="19.75" lengthAdjust="spacingAndGlyphs" stroke="#1a1a1a" stroke-width="0.15">0.632 M</text>
<rect x="630.00" y="306.00" width="10.00" height="155.50" fill="#f0f0f0"/>
<path d="M633.2,315.2 L635.2,312.6 L637.2,315.2" fill="none" stroke="#606060" stroke-width="0.9"/>
<path d="M633.2,452.8 L635.2,455.4 L637.2,452.8" fill="none" stroke="#606060" stroke-width="0.9"/>
<rect x="631.70" y="383.90" width="6.90" height="12.80" fill="#c2c2c2"/>
<rect x="6.20" y="461.20" width="633.80" height="0.80" fill="#202020"/>
<rect x="6.20" y="462.00" width="633.80" height="18.00" fill="#f0f0f0"/>
<rect x="6.20" y="478.00" width="633.80" height="2.00" fill="#f8f8f8"/>
<rect x="145.50" y="461.50" width="31.70" height="14.50" fill="#1a1a1a"/>
<rect x="146.30" y="461.50" width="30.10" height="13.70" fill="#ffffff"/>
<text x="12.50" y="471.90" font-size="9.2" fill="#707070" text-anchor="start" textLength="13.00" lengthAdjust="spacingAndGlyphs" stroke="#707070" stroke-width="0.08">Trade</text>
<text x="35.00" y="471.90" font-size="9.2" fill="#707070" text-anchor="start" textLength="23.00" lengthAdjust="spacingAndGlyphs" stroke="#707070" stroke-width="0.08">Exposure</text>
<text x="67.00" y="471.90" font-size="9.2" fill="#707070" text-anchor="start" textLength="18.00" lengthAdjust="spacingAndGlyphs" stroke="#707070" stroke-width="0.08">History</text>
<text x="94.70" y="471.90" font-size="9.2" fill="#707070" text-anchor="start" textLength="13.30" lengthAdjust="spacingAndGlyphs" stroke="#707070" stroke-width="0.08">News</text>
<text x="117.80" y="471.90" font-size="9.2" fill="#707070" text-anchor="start" textLength="19.10" lengthAdjust="spacingAndGlyphs" stroke="#707070" stroke-width="0.08">Mailbox</text>
<text x="150.00" y="471.90" font-size="9.2" fill="#101010" text-anchor="start" textLength="22.50" lengthAdjust="spacingAndGlyphs" stroke="#101010" stroke-width="0.08">Calendar</text>
<text x="182.00" y="471.90" font-size="9.2" fill="#707070" text-anchor="start" textLength="24.30" lengthAdjust="spacingAndGlyphs" stroke="#707070" stroke-width="0.08">Company</text>
<text x="215.80" y="471.90" font-size="9.2" fill="#707070" text-anchor="start" textLength="14.20" lengthAdjust="spacingAndGlyphs" stroke="#707070" stroke-width="0.08">Alerts</text>
<text x="239.00" y="471.90" font-size="9.2" fill="#707070" text-anchor="start" textLength="18.40" lengthAdjust="spacingAndGlyphs" stroke="#707070" stroke-width="0.08">Articles</text>
<text x="270.00" y="471.90" font-size="9.2" fill="#707070" text-anchor="start" textLength="26.00" lengthAdjust="spacingAndGlyphs" stroke="#707070" stroke-width="0.08">Code Base</text>
<text x="305.60" y="471.90" font-size="9.2" fill="#707070" text-anchor="start" textLength="17.70" lengthAdjust="spacingAndGlyphs" stroke="#707070" stroke-width="0.08">Experts</text>
<text x="332.00" y="471.90" font-size="9.2" fill="#707070" text-anchor="start" textLength="18.00" lengthAdjust="spacingAndGlyphs" stroke="#707070" stroke-width="0.08">Journal</text>
<rect x="30.10" y="464.50" width="0.80" height="10.50" fill="#909090"/>
<rect x="62.10" y="464.50" width="0.80" height="10.50" fill="#909090"/>
<rect x="89.10" y="464.50" width="0.80" height="10.50" fill="#909090"/>
<rect x="112.60" y="464.50" width="0.80" height="10.50" fill="#909090"/>
<rect x="210.90" y="464.50" width="0.80" height="10.50" fill="#909090"/>
<rect x="234.50" y="464.50" width="0.80" height="10.50" fill="#909090"/>
<rect x="265.10" y="464.50" width="0.80" height="10.50" fill="#909090"/>
<rect x="300.60" y="464.50" width="0.80" height="10.50" fill="#909090"/>
<rect x="327.90" y="464.50" width="0.80" height="10.50" fill="#909090"/>
<text x="137.50" y="476.20" font-size="6.8" fill="#e02020" text-anchor="start" textLength="3.40" lengthAdjust="spacingAndGlyphs" style="will-change:transform">5</text>
<text x="259.00" y="476.20" font-size="6.8" fill="#e02020" text-anchor="start" textLength="2.40" lengthAdjust="spacingAndGlyphs" style="will-change:transform">1</text>
<path d="M523.5,475.3 L524.6,467.5 L527.9,467.5 L529,475.3 Z" fill="#f0b400"/>
<path d="M525,467.6 L525.6,465.2 L527,465.2 L527.5,467.6" fill="none" stroke="#d09000" stroke-width="0.8"/>
<text x="531.70" y="473.00" font-size="9.2" fill="#1a1a1a" text-anchor="start" textLength="16.90" lengthAdjust="spacingAndGlyphs" stroke="#1a1a1a" stroke-width="0.15">Market</text>
<path d="M556.2,467.4 Q554.6,470 556.2,472.6 M560.8,467.4 Q562.4,470 560.8,472.6" fill="none" stroke="#4a90d0" stroke-width="1.0"/>
<circle cx="558.5" cy="470" r="0.9" fill="#4a90d0"/>
<text x="563.00" y="473.00" font-size="9.2" fill="#1a1a1a" text-anchor="start" textLength="18.00" lengthAdjust="spacingAndGlyphs" stroke="#1a1a1a" stroke-width="0.15">Signals</text>
<path d="M587.5,471 Q587.0,468.7 588.7,468.1 Q589.3,465.3 590.8,465.3 Q592.3,465.3 592.9,468.1 Q594.6,468.7 594.1,471 Q593.9,472.5 592.5,472.5 L589.1,472.5 Q587.7,472.5 587.5,471 Z" fill="#cde8fc" stroke="#2f80d2" stroke-width="0.9"/>
<rect x="590.40" y="472.50" width="0.80" height="2.10" fill="#2f80d2"/>
<rect x="588.20" y="474.50" width="5.20" height="0.90" fill="#3f8ad6"/>
<text x="596.00" y="473.00" font-size="9.2" fill="#1a1a1a" text-anchor="start" textLength="10.00" lengthAdjust="spacingAndGlyphs" stroke="#1a1a1a" stroke-width="0.15">VPS</text>
<path d="M615.3,465.3 L616.7,467.3 L618.6,467.7 L617.7,470.3 L618.6,472.9 L616.7,473.3 L615.3,475.3 L613.9,473.3 L612.1,472.9 L613.0,470.3 L612.1,467.7 L613.9,467.3 Z" fill="#f4fff4" stroke="#26b426" stroke-width="1.0" stroke-linejoin="round"/>
<path d="M613.9,470.6 L615.0,471.8 L616.9,469.2" fill="none" stroke="#26b426" stroke-width="0.8"/>
<text x="620.30" y="473.00" font-size="9.2" fill="#1a1a1a" text-anchor="start" textLength="14.50" lengthAdjust="spacingAndGlyphs" stroke="#1a1a1a" stroke-width="0.15">Tester</text>
<rect x="168.30" y="40.50" width="261.00" height="190.80" fill="#1e4650"/>
<rect x="168.80" y="41.00" width="260.00" height="189.80" fill="#ffffff"/>
<rect x="169.60" y="41.00" width="258.40" height="189.00" fill="#f0f0f0"/>
<rect x="168.80" y="41.00" width="260.00" height="23.80" fill="#0b5a6c"/>
<path d="M177.2,48.0 Q175.9,49.5 175.8,52.5 Q175,54.5 175.3,55.8 Q177.2,57.4 179.1,55.8 Q179.4,54.5 178.6,52.5 Q178.5,49.5 177.2,48.0 Z" fill="#f5b800"/>
<text x="182.70" y="56.40" font-size="9.4" fill="#ffffff" text-anchor="start" textLength="12.00" lengthAdjust="spacingAndGlyphs" stroke="#ffffff" stroke-width="0.2" style="will-change:transform">Alert</text>
<rect x="372.50" y="52.10" width="5.00" height="0.90" fill="#d8e4e8"/>
<rect x="393.9" y="49.2" width="4.6" height="6.6" fill="none" stroke="#5a8a96" stroke-width="0.8"/>
<path d="M415.2,49.3 L420,56 M420,49.3 L415.2,56" stroke="#ffffff" stroke-width="0.9"/>
<defs><linearGradient id="bg1" x1="0" y1="0" x2="0" y2="1"><stop offset="0" stop-color="#ffd766"/><stop offset="1" stop-color="#fcc236"/></linearGradient><linearGradient id="bg2" x1="0" y1="0" x2="0" y2="1"><stop offset="0" stop-color="#866000"/><stop offset="1" stop-color="#5e4300"/></linearGradient></defs>
<path d="M184.3,71 C183.2,71 182.7,72.4 181.6,73.4 C179.2,75.6 178.3,80 177.9,85 C177.6,89 176.9,92 176.3,95 L192.7,95 C192.1,92 191.4,89 191.1,85 C190.7,80 189.8,75.6 187.4,73.4 C186.3,72.4 185.5,71 184.3,71 Z" fill="url(#bg1)"/>
<ellipse cx="184.5" cy="99.3" rx="8.5" ry="7.4" fill="url(#bg2)"/>
<path d="M184.5,100.3 C183.1,99.6 182.3,97.2 182.3,95.2 C182.3,93.7 183.3,93 184.5,93 C185.7,93 186.7,93.7 186.7,95.2 C186.7,97.2 185.9,99.6 184.5,100.3 Z" fill="#f4b800"/>
<text x="202.00" y="85.60" font-size="8.6" fill="#141414" text-anchor="start" textLength="86.00" lengthAdjust="spacingAndGlyphs" stroke="#141414" stroke-width="0.15">USDJPY Price touched Building Permits</text>
<path d="M416.8,85.6 L418.9,82.4 L421,85.6" fill="none" stroke="#9a9a9a" stroke-width="0.8"/>
<path d="M416.8,118.6 L418.9,121.8 L421,118.6" fill="none" stroke="#9a9a9a" stroke-width="0.8"/>
<rect x="414.60" y="77.00" width="0.60" height="50.00" fill="#e4e4e4"/>
<rect x="173.4" y="132.4" width="251.6" height="67.4" fill="#ffffff" stroke="#a8a8a8" stroke-width="0.9"/>
<rect x="173.90" y="133.00" width="250.60" height="15.40" fill="#ffffff"/>
<rect x="173.90" y="148.00" width="250.60" height="0.80" fill="#dadada"/>
<rect x="223.40" y="133.00" width="0.80" height="15.40" fill="#e0e0e0"/>
<rect x="285.00" y="133.00" width="0.80" height="15.40" fill="#e0e0e0"/>
<path d="M178.6,136.10 C177.8,136.50 177.3,138.10 177.2,139.70 C176.6,141.20 176.2,142.90 176.5,143.90 C177.2,145.10 180.0,145.10 180.7,143.90 C181.0,142.90 180.6,141.20 180.0,139.70 C179.9,138.10 179.4,136.50 178.6,136.10 Z" fill="#f2b400"/>
<text x="183.60" y="144.30" font-size="8.8" fill="#141414" text-anchor="start" textLength="36.20" lengthAdjust="spacingAndGlyphs" stroke="#141414" stroke-width="0.15">2022.05.18 1...</text>
<text x="225.20" y="144.30" font-size="8.8" fill="#141414" text-anchor="start" textLength="57.50" lengthAdjust="spacingAndGlyphs" stroke="#141414" stroke-width="0.15">Trade News EA (USDJP...</text>
<text x="287.00" y="144.30" font-size="8.8" fill="#141414" text-anchor="start" textLength="86.00" lengthAdjust="spacingAndGlyphs" stroke="#141414" stroke-width="0.15">USDJPY Price touched Building Permits</text>
<rect x="173.90" y="148.40" width="250.60" height="15.80" fill="#e8e8e8"/>
<rect x="173.90" y="163.80" width="250.60" height="0.80" fill="#dadada"/>
<rect x="223.40" y="148.40" width="0.80" height="15.80" fill="#e0e0e0"/>
<rect x="285.00" y="148.40" width="0.80" height="15.80" fill="#e0e0e0"/>
<path d="M178.6,151.70 C177.8,152.10 177.3,153.70 177.2,155.30 C176.6,156.80 176.2,158.50 176.5,159.50 C177.2,160.70 180.0,160.70 180.7,159.50 C181.0,158.50 180.6,156.80 180.0,155.30 C179.9,153.70 179.4,152.10 178.6,151.70 Z" fill="#f2b400"/>
<text x="183.60" y="159.90" font-size="8.8" fill="#141414" text-anchor="start" textLength="36.20" lengthAdjust="spacingAndGlyphs" stroke="#141414" stroke-width="0.15">2022.05.18 1...</text>
<text x="225.20" y="159.90" font-size="8.8" fill="#141414" text-anchor="start" textLength="57.50" lengthAdjust="spacingAndGlyphs" stroke="#141414" stroke-width="0.15">Trade News EA (USDJP...</text>
<text x="287.00" y="159.90" font-size="8.8" fill="#141414" text-anchor="start" textLength="86.00" lengthAdjust="spacingAndGlyphs" stroke="#141414" stroke-width="0.15">USDJPY Price touched Building Permits</text>
<rect x="173.90" y="164.20" width="250.60" height="15.20" fill="#ffffff"/>
<rect x="173.90" y="179.00" width="250.60" height="0.80" fill="#dadada"/>
<rect x="223.40" y="164.20" width="0.80" height="15.20" fill="#e0e0e0"/>
<rect x="285.00" y="164.20" width="0.80" height="15.20" fill="#e0e0e0"/>
<path d="M178.6,167.20 C177.8,167.60 177.3,169.20 177.2,170.80 C176.6,172.30 176.2,174.00 176.5,175.00 C177.2,176.20 180.0,176.20 180.7,175.00 C181.0,174.00 180.6,172.30 180.0,170.80 C179.9,169.20 179.4,167.60 178.6,167.20 Z" fill="#f2b400"/>
<text x="183.60" y="175.40" font-size="8.8" fill="#141414" text-anchor="start" textLength="36.20" lengthAdjust="spacingAndGlyphs" stroke="#141414" stroke-width="0.15">2022.05.18 1...</text>
<text x="225.20" y="175.40" font-size="8.8" fill="#141414" text-anchor="start" textLength="57.50" lengthAdjust="spacingAndGlyphs" stroke="#141414" stroke-width="0.15">Trade News EA (USDJP...</text>
<text x="287.00" y="175.40" font-size="8.8" fill="#141414" text-anchor="start" textLength="86.00" lengthAdjust="spacingAndGlyphs" stroke="#141414" stroke-width="0.15">USDJPY Price touched Building Permits</text>
<rect x="390.00" y="208.00" width="34.80" height="15.80" fill="#0078d7"/>
<rect x="391.50" y="209.50" width="31.80" height="12.80" fill="#e1e1e1"/>
<text x="400.60" y="219.40" font-size="8.8" fill="#141414" text-anchor="start" textLength="12.80" lengthAdjust="spacingAndGlyphs" stroke="#141414" stroke-width="0.15">Close</text>
<rect x="426.50" y="228.50" width="0.80" height="0.80" fill="#b0b0b0"/>
<rect x="426.50" y="226.50" width="0.80" height="0.80" fill="#b0b0b0"/>
<rect x="424.50" y="228.50" width="0.80" height="0.80" fill="#b0b0b0"/>
</svg></body></html>
